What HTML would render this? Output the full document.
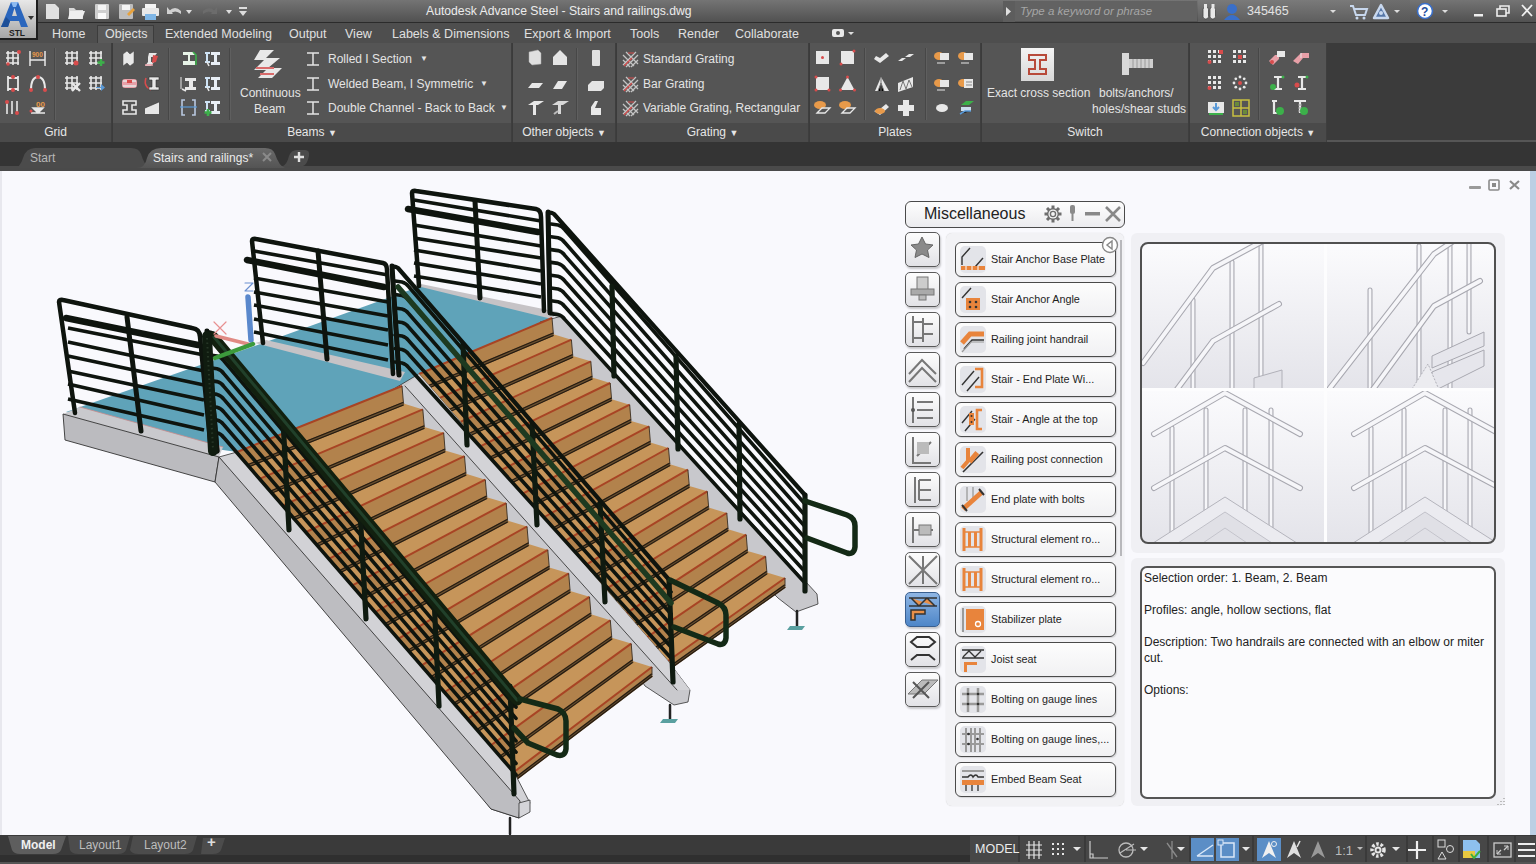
<!DOCTYPE html>
<html><head><meta charset="utf-8">
<style>
*{margin:0;padding:0;box-sizing:border-box}
html,body{width:1536px;height:864px;overflow:hidden;background:#f9f9fc;font-family:"Liberation Sans",sans-serif}
.a{position:absolute}
.t{position:absolute;white-space:nowrap;color:#e4e4e4;font-size:12px;line-height:14px}
.pn{position:absolute;top:43px;height:99px;background:#555555}
.pt{position:absolute;left:0;top:80px;width:100%;height:19px;background:#4a4a4a;color:#e6e6e6;font-size:12px;text-align:center;line-height:19px;white-space:nowrap}
.sep{position:absolute;top:5px;width:2px;height:72px;border-left:1px solid #474747;border-right:1px solid #5f5f5f}
svg{position:absolute;overflow:visible}
.btn{position:absolute;left:955px;width:161px;height:35px;border:1.5px solid #4a4a4a;border-radius:6px;background:linear-gradient(#fdfdfd,#f1f1f3);box-shadow:1px 1px 1px rgba(0,0,0,.12)}
.btn span{position:absolute;left:35px;top:10px;font-size:10.8px;color:#1e1e1e;white-space:nowrap}
.ib{position:absolute;left:905px;width:35px;height:35px;border:1.5px solid #5a5a5a;border-radius:5px;background:linear-gradient(#fdfdfd,#e2e2e6);box-shadow:1px 2px 2px rgba(0,0,0,.2)}
</style></head><body>

<div class="a" style="left:0;top:0;width:1536px;height:23px;background:linear-gradient(#747474,#515151);border-bottom:1px solid #2b2b2b"></div>
<div class="a" style="left:1198px;top:0;width:172px;height:22px;background:linear-gradient(#7a7a7a,#5e5e5e)"></div>
<div class="a" style="left:1370px;top:0;width:40px;height:22px;background:linear-gradient(#6e6e6e,#585858)"></div>
<div class="a" style="left:0;top:0;width:38px;height:40px;background:linear-gradient(#e8e8e8,#a6a6a6);border-right:2px solid #1e1e1e;border-bottom:2px solid #1e1e1e"></div>
<svg style="left:0;top:0" width="40" height="40">
 <path d="M1 27 L11 2 L18 2 L28 27 L21 27 L19 21 L10 21 L8 27 Z M12 16 L17 16 L14.5 8Z" fill="#2a66bd" fill-rule="evenodd"/>
 <path d="M11 2 L18 2 L16 7 L13 7Z" fill="#8dbaf0"/><path d="M1 27 L8 27 L10 21 L6 17Z" fill="#1d4f98"/>
 <path d="M28 16 L34 16 L31 20Z" fill="#333"/>
 <text x="9" y="36" font-size="8.5" font-weight="bold" fill="#1e1e1e" font-family="Liberation Sans">STL</text>
</svg>
<svg style="left:44px;top:2px" width="210" height="20">
 <path d="M2 2h9l4 4v11H2z" fill="#e0e0e0"/>
 <path d="M25 6h5l2 2h7v9H25z" fill="#d8d8d8"/><path d="M26 9h15l-3 8H24z" fill="#eee"/>
 <rect x="51" y="2" width="14" height="15" rx="1" fill="#cfcfcf"/><rect x="54" y="3" width="8" height="5" fill="#f4f4f4"/><rect x="54" y="11" width="8" height="6" fill="#fafafa"/>
 <rect x="75" y="2" width="14" height="15" rx="1" fill="#bdbdbd"/><rect x="78" y="3" width="8" height="5" fill="#f4f4f4"/><path d="M83 12l6-6 2 2-6 6z" fill="#e8a23c"/>
 <rect x="98" y="6" width="17" height="8" rx="1" fill="#e8e8e8"/><rect x="101" y="2" width="11" height="4" fill="#f4f4f4"/><rect x="101" y="12" width="11" height="6" fill="#7fb6e6"/>
 <path d="M125 9 q6 -6 12 0 v3 q-6 -5 -11 0z" fill="#d0d0d0"/><path d="M123 5 l0 7 l6 0z" fill="#d0d0d0"/>
 <path d="M142 8l3 4 3-4z" fill="#ddd"/>
 <path d="M171 9 q-6 -6 -12 0 v3 q6 -5 11 0z" fill="#6c6c6c"/><path d="M173 5 l0 7 l-6 0z" fill="#6c6c6c"/>
 <path d="M182 8l3 4 3-4z" fill="#ddd"/>
 <rect x="195" y="5" width="8" height="2" fill="#ddd"/><path d="M195 9l4 5 4-5z" fill="#ddd"/>
</svg>
<div class="t" style="left:426px;top:4px;font-size:12.2px;color:#ececec">Autodesk Advance Steel - Stairs and railings.dwg</div>
<div class="a" style="left:1003px;top:1px;width:12px;height:21px;background:#5d5d5d"></div>
<svg style="left:1006px;top:7px" width="6" height="9"><path d="M0 0L5 4.5L0 9Z" fill="#e0e0e0"/></svg>
<div class="a" style="left:1015px;top:1px;width:182px;height:20px;background:#626262"></div>
<div class="t" style="left:1020px;top:4px;font-size:11.5px;font-style:italic;color:#a6a6a6">Type a keyword or phrase</div>
<div class="t" style="left:1247px;top:4px;font-size:12.5px;color:#e2e2e2">345465</div>
<svg style="left:1200px;top:2px" width="336" height="20">
 <rect x="3" y="5" width="5.5" height="12" rx="2.5" fill="#e8e8e8" stroke="#444" stroke-width=".8"/><rect x="10" y="5" width="5.5" height="12" rx="2.5" fill="#e8e8e8" stroke="#444" stroke-width=".8"/><rect x="4" y="2" width="3" height="4" fill="#e8e8e8"/><rect x="11.5" y="2" width="3" height="4" fill="#e8e8e8"/>
 <circle cx="32" cy="7" r="5" fill="#3a6fc9"/><path d="M24 18 q8 -10 16 0z" fill="#3a6fc9"/>
 <path d="M130 8l3 3 3-3z" fill="#ddd"/>
 <path d="M150 4h3l3 9h9l2-6h-13" stroke="#c8d8ee" stroke-width="2" fill="none"/><circle cx="157" cy="16" r="1.5" fill="#c8d8ee"/><circle cx="164" cy="16" r="1.5" fill="#c8d8ee"/>
 <path d="M174 16 L181 3 L188 16Z" stroke="#c8d8ee" stroke-width="2.5" fill="#5677a8" stroke-linejoin="round"/><circle cx="181" cy="11" r="2" fill="#c8d8ee"/>
 <path d="M194 8l3 3 3-3z" fill="#ddd"/>
 <circle cx="225" cy="9" r="7.5" fill="#fff" stroke="#3a6fc9" stroke-width="1.6"/><text x="221" y="14" font-size="12" font-weight="bold" fill="#1f4fa0" font-family="Liberation Sans">?</text>
 <path d="M242 8l3 3 3-3z" fill="#ddd"/>
 <rect x="274" y="12" width="9" height="2.5" fill="#eee"/>
 <rect x="297" y="7" width="9" height="7" fill="none" stroke="#eee" stroke-width="1.6"/><path d="M300 7v-3h9v7h-3" fill="none" stroke="#eee" stroke-width="1.6"/>
 <path d="M322 3l10 11M332 3l-10 11" stroke="#f0f0f0" stroke-width="1.8"/>
</svg>
<div class="a" style="left:38px;top:23px;width:1498px;height:20px;background:#4e4e4e"></div>
<div class="a" style="left:0;top:40px;width:38px;height:3px;background:#4e4e4e"></div>
<div class="a" style="left:97px;top:25px;width:57px;height:18px;background:#5a5a5a;border:1px solid #3c3c3c;border-bottom:none"></div>
<div class="t" style="left:52px;top:27px;font-size:12.5px;color:#e0e0e0">Home</div>
<div class="t" style="left:105px;top:27px;font-size:12.5px;color:#e0e0e0">Objects</div>
<div class="t" style="left:165px;top:27px;font-size:12.5px;color:#e0e0e0">Extended Modeling</div>
<div class="t" style="left:289px;top:27px;font-size:12.5px;color:#e0e0e0">Output</div>
<div class="t" style="left:345px;top:27px;font-size:12.5px;color:#e0e0e0">View</div>
<div class="t" style="left:392px;top:27px;font-size:12.5px;color:#e0e0e0">Labels &amp; Dimensions</div>
<div class="t" style="left:524px;top:27px;font-size:12.5px;color:#e0e0e0">Export &amp; Import</div>
<div class="t" style="left:630px;top:27px;font-size:12.5px;color:#e0e0e0">Tools</div>
<div class="t" style="left:678px;top:27px;font-size:12.5px;color:#e0e0e0">Render</div>
<div class="t" style="left:735px;top:27px;font-size:12.5px;color:#e0e0e0">Collaborate</div>
<svg style="left:832px;top:28px" width="30" height="12"><rect x="0" y="1" width="12" height="8" rx="2" fill="#e8e8e8"/><circle cx="6" cy="5" r="2" fill="#555"/><path d="M16 4l3 3 3-3z" fill="#ddd"/></svg>
<div class="a" style="left:0;top:43px;width:1536px;height:99px;background:#3b3b3b"></div>
<div class="pn" style="left:0px;width:112px;border-right:1px solid #3e3e3e"><div class="pt">Grid</div></div>
<div class="pn" style="left:113px;width:399px;border-right:1px solid #3e3e3e"><div class="pt">Beams <span style="font-size:9px">&#9660;</span></div></div>
<div class="pn" style="left:513px;width:103px;border-right:1px solid #3e3e3e"><div class="pt">Other objects <span style="font-size:9px">&#9660;</span></div></div>
<div class="pn" style="left:617px;width:192px;border-right:1px solid #3e3e3e"><div class="pt">Grating <span style="font-size:9px">&#9660;</span></div></div>
<div class="pn" style="left:810px;width:171px;border-right:1px solid #3e3e3e"><div class="pt">Plates</div></div>
<div class="pn" style="left:982px;width:207px;border-right:1px solid #3e3e3e"><div class="pt">Switch</div></div>
<div class="pn" style="left:1190px;width:137px;border-right:1px solid #3e3e3e"><div class="pt">Connection objects <span style="font-size:9px">&#9660;</span></div></div>
<div class="sep" style="left:54px;top:48px;position:absolute"></div>
<div class="sep" style="left:168px;top:48px;position:absolute"></div>
<div class="sep" style="left:229px;top:48px;position:absolute"></div>
<div class="sep" style="left:576px;top:48px;position:absolute"></div>
<div class="sep" style="left:864px;top:48px;position:absolute"></div>
<div class="sep" style="left:925px;top:48px;position:absolute"></div>
<div class="sep" style="left:1258px;top:48px;position:absolute"></div>
<svg style="left:5px;top:50px" width="18" height="18"><path d="M1 3h13M1 8h13M1 13h13M3 1v14M8 1v14M13 1v14" stroke="#e8e8e8" stroke-width="1.6"/><circle cx="14" cy="2" r="2" fill="#d84c4c"/><circle cx="3" cy="14" r="1.8" fill="#d84c4c"/></svg>
<svg style="left:29px;top:50px" width="18" height="18"><path d="M1 1v15M16 1v15M1 10h15" stroke="#e8e8e8" stroke-width="1.5"/><text x="3" y="7" font-size="6.5" font-weight="bold" fill="#e89a4a" font-family="Liberation Sans">900</text></svg>
<svg style="left:5px;top:75px" width="18" height="18"><path d="M3 1v15M13 1v15M3 3h10M3 14h10" stroke="#e8e8e8" stroke-width="1.8"/><circle cx="8" cy="2" r="2" fill="#d84c4c"/><circle cx="8" cy="15" r="2" fill="#d84c4c"/></svg>
<svg style="left:29px;top:75px" width="18" height="18"><path d="M2 15 Q2 2 9 2 Q16 2 16 15" stroke="#e8e8e8" stroke-width="2" fill="none"/><circle cx="9" cy="2" r="2" fill="#d84c4c"/><circle cx="2" cy="15" r="2" fill="#d84c4c"/><circle cx="16" cy="15" r="2" fill="#d84c4c"/></svg>
<svg style="left:5px;top:99px" width="18" height="18"><path d="M2 2v13M7 2v13M12 2v13" stroke="#e8e8e8" stroke-width="1.6"/><circle cx="2" cy="3" r="2" fill="#d84c4c"/><circle cx="12" cy="14" r="2" fill="#d84c4c"/></svg>
<svg style="left:29px;top:99px" width="18" height="18"><text x="7" y="8" font-size="8" font-weight="bold" fill="#e89a4a" font-family="Liberation Sans">00</text><path d="M2 14h14M4 9h10l-5 5z" stroke="#e8e8e8" stroke-width="1.5" fill="#e8e8e8"/><circle cx="2" cy="12" r="1.5" fill="#d84c4c"/></svg>
<svg style="left:64px;top:50px" width="18" height="18"><path d="M1 3h13M1 8h13M1 13h13M3 1v14M8 1v14M13 1v14" stroke="#e8e8e8" stroke-width="1.6"/><circle cx="12" cy="13" r="2.5" fill="#d84c4c"/></svg>
<svg style="left:88px;top:50px" width="18" height="18"><path d="M1 3h13M1 8h13M1 13h13M3 1v14M8 1v14M13 1v14" stroke="#e8e8e8" stroke-width="1.6"/><path d="M13 9v7M9.5 12.5h7" stroke="#3cb04a" stroke-width="2.4"/></svg>
<svg style="left:64px;top:75px" width="18" height="18"><path d="M1 3h13M1 8h13M1 13h13M3 1v14M8 1v14M13 1v14" stroke="#e8e8e8" stroke-width="1.6"/><path d="M8 8l8 8M16 8l-8 8" stroke="#e8e8e8" stroke-width="2.4"/></svg>
<svg style="left:88px;top:75px" width="18" height="18"><path d="M1 3h13M1 8h13M1 13h13M3 1v14M8 1v14M13 1v14" stroke="#e8e8e8" stroke-width="1.6"/><path d="M8 12h5v-3l4 3.5-4 3.5v-3H8z" fill="#5a9ad8"/></svg>
<svg style="left:121px;top:50px" width="18" height="18"><path d="M2 4l4-3 3 3 4-3v12l-4 3-3-3-4 3z" fill="#e8e8e8" stroke="#444" stroke-width=".5"/></svg>
<svg style="left:143px;top:50px" width="18" height="18"><path d="M6 3h8l-3 4H8v5h3l-3 4H2l3-4V7z" fill="#e8e8e8"/><path d="M10 5l5 1-2 6-4 1z" fill="#d84c4c"/><path d="M2 15h8" stroke="#e8a0a8" stroke-width="1.5"/></svg>
<svg style="left:121px;top:75px" width="18" height="18"><rect x="1" y="4" width="15" height="9" rx="3" fill="#e8a0a8"/><path d="M2 6h13M2 11h13" stroke="#e8e8e8" stroke-width="1.4"/><rect x="6" y="5" width="5" height="3" fill="#d84c4c"/></svg>
<svg style="left:143px;top:75px" width="18" height="18"><path d="M3 3 Q1 8 4 12 L8 15" stroke="#d84c4c" stroke-width="1.6" fill="none"/><path d="M6 2h10v3h-3v7h3v3H6v-3h3V5H6z" fill="#e8e8e8" stroke="#333" stroke-width=".6"/></svg>
<svg style="left:121px;top:99px" width="18" height="18"><path d="M2 2h13v4h-4v5h4v4H2v-4h4V6H2z" fill="none" stroke="#e8e8e8" stroke-width="1.6"/></svg>
<svg style="left:143px;top:99px" width="18" height="18"><path d="M2 9l14-6v12H2z" fill="#e8e8e8"/><path d="M2 9l14-6" stroke="#333" stroke-width=".6"/></svg>
<svg style="left:180px;top:50px" width="18" height="18"><path d="M3 2h10l2 3h-5v6h5v4H3v-4h5V5H3z" fill="#e8f4e8"/><path d="M13 2l3 3v10" stroke="#3cb04a" stroke-width="1.6" fill="none"/></svg>
<svg style="left:203px;top:50px" width="18" height="18"><path d="M2 3h5M4 3v9M2 12h5" stroke="#cfe3f5" stroke-width="2"/><path d="M8 2h9v3h-3v7h3v3H8v-3h3V5H8z" fill="#e8eef5"/><path d="M4 12l2 4" stroke="#e8e8e8" stroke-width="1.5"/></svg>
<svg style="left:180px;top:75px" width="18" height="18"><path d="M1 2v12" stroke="#e8e8e8" stroke-width="1"/><path d="M5 3h11v3h-3v6h3v3H5v-3h4V6H5z" fill="#e8e8e8"/><path d="M2 14l4 2" stroke="#e8e8e8" stroke-width="1.6"/></svg>
<svg style="left:203px;top:75px" width="18" height="18"><path d="M2 3h5M4 3v9M2 12h5" stroke="#cfe3f5" stroke-width="2"/><path d="M8 2h9v3h-3v7h3v3H8v-3h3V5H8z" fill="#e8eef5"/><path d="M4 12l2 4" stroke="#e8e8e8" stroke-width="1.5"/></svg>
<svg style="left:180px;top:99px" width="18" height="18"><path d="M5 1H2v15h3M12 1h3v15h-3" stroke="#b8c8e0" stroke-width="1.6" fill="none"/><path d="M0 8h17" stroke="#5a9ad8" stroke-width="1.2"/></svg>
<svg style="left:203px;top:99px" width="18" height="18"><path d="M2 3h5M4 3v9M2 12h5" stroke="#cfe3f5" stroke-width="2"/><path d="M8 2h9v3h-3v7h3v3H8v-3h3V5H8z" fill="#e8eef5"/><path d="M5 10v7M1.5 13.5h7" stroke="#3cb04a" stroke-width="2.6"/></svg>
<svg style="left:527px;top:49px" width="18" height="18"><path d="M2 3l9-2 3 3v11l-9 1-3-3z" fill="#e0e0e0" stroke="#aaa" stroke-width=".5"/></svg>
<svg style="left:551px;top:49px" width="18" height="18"><path d="M2 8l7-7 7 7v8H2z" fill="#e4e4e4"/></svg>
<svg style="left:587px;top:49px" width="18" height="18"><rect x="5" y="1" width="8" height="16" rx="1" fill="#e0e0e0"/></svg>
<svg style="left:527px;top:75px" width="18" height="18"><path d="M1 13l4-5h11l-4 5z" fill="#e8e8e8"/></svg>
<svg style="left:551px;top:75px" width="18" height="18"><path d="M2 14l5-8h9l-5 8z" fill="#e8e8e8"/></svg>
<svg style="left:587px;top:75px" width="18" height="18"><path d="M1 10l4-4h12v7l-3 3H1z" fill="#e4e4e4"/></svg>
<svg style="left:527px;top:99px" width="18" height="18"><path d="M1 6l6-4h10l-6 4h-2v10H6V6z" fill="#e8e8e8"/></svg>
<svg style="left:551px;top:99px" width="18" height="18"><path d="M1 6l6-4h11l-6 4h-2v9h-3V6z" fill="#d8d8d8"/><path d="M3 15l4 -3" stroke="#bbb" stroke-width="2"/></svg>
<svg style="left:587px;top:99px" width="18" height="18"><path d="M4 16V8l4-6h3l-3 7h6v7z" fill="#e8e8e8"/></svg>
<svg style="left:814px;top:49px" width="18" height="18"><rect x="2" y="2" width="13" height="13" fill="#e8e8e8"/><circle cx="8.5" cy="8.5" r="1.5" fill="#d84c4c"/></svg>
<svg style="left:839px;top:49px" width="18" height="18"><rect x="2" y="2" width="13" height="13" fill="#e8e8e8"/><circle cx="15" cy="2" r="1.5" fill="#d84c4c"/><circle cx="2" cy="15" r="1.5" fill="#d84c4c"/></svg>
<svg style="left:814px;top:75px" width="18" height="18"><rect x="2" y="2" width="13" height="13" fill="#e8e8e8"/><circle cx="2" cy="2" r="1.5" fill="#d84c4c"/><circle cx="15" cy="15" r="1.5" fill="#d84c4c"/><circle cx="2" cy="15" r="1.5" fill="#d84c4c"/></svg>
<svg style="left:839px;top:75px" width="18" height="18"><path d="M8.5 2l7 13h-14z" fill="#e8e8e8"/><circle cx="8.5" cy="2" r="1.5" fill="#d84c4c"/><circle cx="15.5" cy="15" r="1.5" fill="#d84c4c"/><circle cx="1.5" cy="15" r="1.5" fill="#d84c4c"/></svg>
<svg style="left:813px;top:99px" width="18" height="18"><ellipse cx="7" cy="6" rx="6" ry="4" fill="#e89a4a"/><path d="M4 14l5-5h8l-5 5z" fill="none" stroke="#e8e8e8" stroke-width="1.3"/></svg>
<svg style="left:838px;top:99px" width="18" height="18"><ellipse cx="7" cy="6" rx="6" ry="4" fill="#e89a4a"/><path d="M4 14l5-5h8l-5 5z" fill="none" stroke="#e8e8e8" stroke-width="1.3"/></svg>
<svg style="left:873px;top:49px" width="18" height="18"><path d="M1 10l6 4 9-7-3-3-6 5-4-2z" fill="#e8e8e8"/></svg>
<svg style="left:897px;top:49px" width="18" height="18"><path d="M1 12l4-3h4l-4 3zM8 8l4-3h5l-4 3z" fill="#e8e8e8"/></svg>
<svg style="left:873px;top:75px" width="18" height="18"><path d="M2 16l6-14 8 14z" fill="#e8e8e8"/><path d="M8 2v14M5 16l3-8 3 8" stroke="#777" stroke-width="1"/></svg>
<svg style="left:897px;top:75px" width="18" height="18"><path d="M1 8l15-6v10L1 17z" fill="#e8e8e8"/><path d="M3 15l3-9 3 8 3-9 3 7" stroke="#777" stroke-width="1" fill="none"/></svg>
<svg style="left:873px;top:99px" width="18" height="18"><path d="M1 12l6 4 9-8-3-3-6 5z" fill="#e8e8e8"/><ellipse cx="7" cy="12" rx="5" ry="3" fill="#e89a4a"/></svg>
<svg style="left:897px;top:99px" width="18" height="18"><path d="M6 1h6v5h5v6h-5v5H6v-5H1V6h5z" fill="#e8e8e8"/></svg>
<svg style="left:933px;top:49px" width="18" height="18"><ellipse cx="6" cy="7" rx="5" ry="4" fill="#e89a4a"/><rect x="7" y="4" width="9" height="7" fill="#e8e8e8"/><path d="M4 14h8" stroke="#e8e8e8"/></svg>
<svg style="left:957px;top:49px" width="18" height="18"><ellipse cx="6" cy="7" rx="5" ry="4" fill="#e89a4a"/><rect x="7" y="4" width="9" height="7" fill="#e8e8e8"/><path d="M4 14h8" stroke="#e8e8e8"/></svg>
<svg style="left:933px;top:75px" width="18" height="18"><ellipse cx="6" cy="8" rx="5" ry="4" fill="#e89a4a"/><rect x="7" y="5" width="9" height="7" fill="#e8e8e8"/><path d="M4 15h8" stroke="#e8e8e8"/></svg>
<svg style="left:957px;top:75px" width="18" height="18"><ellipse cx="6" cy="8" rx="5" ry="4" fill="#e89a4a"/><rect x="7" y="4" width="9" height="9" fill="#e8e8e8"/><path d="M9 7h6M9 10h6" stroke="#888"/></svg>
<svg style="left:933px;top:99px" width="18" height="18"><ellipse cx="9" cy="9" rx="6" ry="4" fill="#e8e8e8"/></svg>
<svg style="left:957px;top:99px" width="18" height="18"><path d="M4 6l5-4h8l-5 4z" fill="#3cb04a"/><path d="M4 8h10v4H4z" fill="#cde"/><path d="M3 15l5-3h6" stroke="#5a9ad8" stroke-width="1.5"/></svg>
<svg style="left:1207px;top:49px" width="18" height="18"><rect x="1" y="1" width="3" height="3" fill="#e8e8e8"/><rect x="1" y="6" width="3" height="3" fill="#e8e8e8"/><rect x="1" y="11" width="3" height="3" fill="#e8e8e8"/><rect x="6" y="1" width="3" height="3" fill="#e8e8e8"/><rect x="6" y="6" width="3" height="3" fill="#e8e8e8"/><rect x="6" y="11" width="3" height="3" fill="#e8e8e8"/><rect x="11" y="1" width="3" height="3" fill="#e8e8e8"/><rect x="11" y="6" width="3" height="3" fill="#e8e8e8"/><rect x="11" y="11" width="3" height="3" fill="#e8e8e8"/><rect x="12" y="1" width="4" height="4" fill="#d84c4c"/><circle cx="2.5" cy="13" r="2" fill="#d84c4c"/></svg>
<svg style="left:1232px;top:49px" width="18" height="18"><rect x="1" y="1" width="3" height="3" fill="#e8e8e8"/><rect x="1" y="6" width="3" height="3" fill="#e8e8e8"/><rect x="1" y="11" width="3" height="3" fill="#e8e8e8"/><rect x="6" y="1" width="3" height="3" fill="#e8e8e8"/><rect x="6" y="6" width="3" height="3" fill="#e8e8e8"/><rect x="6" y="11" width="3" height="3" fill="#e8e8e8"/><rect x="11" y="1" width="3" height="3" fill="#e8e8e8"/><rect x="11" y="6" width="3" height="3" fill="#e8e8e8"/><rect x="11" y="11" width="3" height="3" fill="#e8e8e8"/><rect x="6" y="6" width="4" height="4" fill="#d84c4c"/></svg>
<svg style="left:1207px;top:75px" width="18" height="18"><rect x="1" y="1" width="3" height="3" fill="#e8e8e8"/><rect x="1" y="6" width="3" height="3" fill="#e8e8e8"/><rect x="1" y="11" width="3" height="3" fill="#e8e8e8"/><rect x="6" y="1" width="3" height="3" fill="#e8e8e8"/><rect x="6" y="6" width="3" height="3" fill="#e8e8e8"/><rect x="6" y="11" width="3" height="3" fill="#e8e8e8"/><rect x="11" y="1" width="3" height="3" fill="#e8e8e8"/><rect x="11" y="6" width="3" height="3" fill="#e8e8e8"/><rect x="11" y="11" width="3" height="3" fill="#e8e8e8"/><circle cx="2.5" cy="13" r="2" fill="#d84c4c"/></svg>
<svg style="left:1232px;top:75px" width="18" height="18"><circle cx="14.0" cy="8.0" r="1.4" fill="#e8e8e8"/><circle cx="12.2" cy="12.2" r="1.4" fill="#e8e8e8"/><circle cx="8.0" cy="14.0" r="1.4" fill="#e8e8e8"/><circle cx="3.8" cy="12.2" r="1.4" fill="#e8e8e8"/><circle cx="2.0" cy="8.0" r="1.4" fill="#e8e8e8"/><circle cx="3.8" cy="3.8" r="1.4" fill="#e8e8e8"/><circle cx="8.0" cy="2.0" r="1.4" fill="#e8e8e8"/><circle cx="12.2" cy="3.8" r="1.4" fill="#e8e8e8"/><circle cx="8" cy="8" r="2" fill="#d84c4c"/></svg>
<svg style="left:1207px;top:99px" width="18" height="18"><rect x="1" y="3" width="16" height="11" fill="#e8e8e8"/><path d="M9 4v6M6 8l3 3 3-3" stroke="#5a9ad8" stroke-width="2" fill="none"/><path d="M2 15h14" stroke="#3cb04a" stroke-width="2"/></svg>
<svg style="left:1232px;top:99px" width="18" height="18"><rect x="1" y="1" width="16" height="16" fill="none" stroke="#c8c040" stroke-width="1.5"/><path d="M9 1v16M1 9h16" stroke="#c8c040" stroke-width="1.5"/><rect x="3" y="3" width="4" height="4" fill="#6a8a3a"/><rect x="11" y="11" width="4" height="4" fill="#6a8a3a"/></svg>
<svg style="left:1268px;top:49px" width="18" height="18"><path d="M1 12l6-6h4v4l-6 6z" fill="#e8a0a8"/><rect x="9" y="2" width="8" height="6" fill="#e8e8e8"/><circle cx="4" cy="13" r="2" fill="#d84c4c"/></svg>
<svg style="left:1292px;top:49px" width="18" height="18"><path d="M1 12l8-8h8v5h-6l-5 6z" fill="#e8a0a8"/><path d="M9 4v5" stroke="#e8e8e8"/></svg>
<svg style="left:1268px;top:75px" width="18" height="18"><path d="M6 2h8M10 2v12M6 14h8" stroke="#e8e8e8" stroke-width="2.2"/><circle cx="5" cy="12" r="3" fill="#3cb04a"/><circle cx="15" cy="2" r="1.5" fill="#3cb04a"/></svg>
<svg style="left:1292px;top:75px" width="18" height="18"><path d="M6 2h8M10 2v12M6 14h8" stroke="#e8e8e8" stroke-width="2.2"/><circle cx="5" cy="10" r="2.5" fill="#d84c4c"/><circle cx="15" cy="2" r="1.5" fill="#3cb04a"/></svg>
<svg style="left:1268px;top:99px" width="18" height="18"><path d="M4 2h5M6 2v12h5" stroke="#e8e8e8" stroke-width="2.2" fill="none"/><circle cx="12" cy="12" r="4" fill="#3cb04a"/></svg>
<svg style="left:1292px;top:99px" width="18" height="18"><path d="M2 2h12M8 2v12" stroke="#e8e8e8" stroke-width="2.2"/><path d="M6 6h4M6 9h4M6 12h4" stroke="#999"/><circle cx="12" cy="12" r="4" fill="#3cb04a"/></svg>
<svg style="left:250px;top:48px" width="36" height="34"><path d="M10 2l14 0l-8 8h14l-12 10h14l-10 10H8l8-8H4l10-10H4z" fill="#e8e8e8"/><path d="M6 20h18M10 26h14" stroke="#d86a6a" stroke-width="2"/></svg>
<div class="t" style="left:240px;top:86px">Continuous</div><div class="t" style="left:254px;top:102px">Beam</div>
<svg style="left:305px;top:51px" width="16" height="16"><path d="M2 2h12M2 14h12M8 2v12" stroke="#e4e4e4" stroke-width="1.5"/></svg>
<div class="t" style="left:328px;top:52px">Rolled I Section</div>
<div class="t" style="left:420px;top:52px;font-size:8px">&#9660;</div>
<svg style="left:305px;top:76px" width="16" height="16"><path d="M2 2h12M2 14h12M8 2v12" stroke="#e4e4e4" stroke-width="1.5"/></svg>
<div class="t" style="left:328px;top:77px">Welded Beam, I Symmetric</div>
<div class="t" style="left:480px;top:77px;font-size:8px">&#9660;</div>
<svg style="left:305px;top:100px" width="16" height="16"><path d="M2 2h12M2 14h12M8 2v12" stroke="#e4e4e4" stroke-width="1.5"/></svg>
<div class="t" style="left:328px;top:101px">Double Channel - Back to Back</div>
<div class="t" style="left:500px;top:101px;font-size:8px">&#9660;</div>
<svg style="left:622px;top:51px" width="18" height="18"><path d="M1 4l11 11M4 1l12 12M1 9l7 7M1 14l13-13M4 16l12-12M9 16l7-7" stroke="#c4c4c4" stroke-width="1.3"/><path d="M2 15l8-8M6 2l6 0" stroke="#d84c4c" stroke-width="1.2"/></svg>
<div class="t" style="left:643px;top:52px">Standard Grating</div>
<svg style="left:622px;top:76px" width="18" height="18"><path d="M1 4l11 11M4 1l12 12M1 9l7 7M1 14l13-13M4 16l12-12M9 16l7-7" stroke="#c4c4c4" stroke-width="1.3"/><path d="M2 15l8-8M6 2l6 0" stroke="#d84c4c" stroke-width="1.2"/></svg>
<div class="t" style="left:643px;top:77px">Bar Grating</div>
<svg style="left:622px;top:100px" width="18" height="18"><path d="M1 4l11 11M4 1l12 12M1 9l7 7M1 14l13-13M4 16l12-12M9 16l7-7" stroke="#c4c4c4" stroke-width="1.3"/><path d="M2 15l8-8M6 2l6 0" stroke="#d84c4c" stroke-width="1.2"/></svg>
<div class="t" style="left:643px;top:101px">Variable Grating, Rectangular</div>
<div class="a" style="left:1021px;top:48px;width:33px;height:33px;background:linear-gradient(#f4f4f4,#d8d8d8)"></div>
<svg style="left:1021px;top:48px" width="33" height="33"><path d="M8 7h17v5h-6v9h6v5H8v-5h6v-9H8z" fill="none" stroke="#b84a3a" stroke-width="2"/></svg>
<svg style="left:1120px;top:52px" width="36" height="24"><rect x="2" y="1" width="7" height="22" fill="#d8d8d8"/><rect x="9" y="7" width="24" height="9" fill="#cfcfcf"/><path d="M13 7v9M17 7v9M21 7v9M25 7v9M29 7v9" stroke="#9a9a9a"/></svg>
<div class="t" style="left:987px;top:86px">Exact cross section</div>
<div class="t" style="left:1099px;top:86px">bolts/anchors/</div><div class="t" style="left:1092px;top:102px">holes/shear studs</div>
<div class="a" style="left:0;top:142px;width:1536px;height:29px;background:#343434"></div>
<div class="a" style="left:1327px;top:140px;width:209px;height:2px;background:#565656"></div>
<div class="a" style="left:0;top:166px;width:1536px;height:5px;background:#4a4a4a"></div>
<svg style="left:0;top:143px" width="320" height="28"><defs><linearGradient id="tg" x1="0" y1="0" x2="0" y2="1"><stop offset="0" stop-color="#6a6a6a"/><stop offset="1" stop-color="#545454"/></linearGradient></defs><path d="M14 25 q6 0 9 -10 q3 -10 12 -10 h96 q8 0 10 6 q3 10 8 14z" fill="#4b4b4b"/><path d="M137 25 q8 0 10 -10 q3 -10 14 -10 h104 q8 0 10 6 q4 12 10 14z" fill="url(#tg)"/><path d="M283 23 q4 -2 6 -10 q2 -6 8 -6 h8 q5 0 4 6 q-2 9 -6 10z" fill="#4b4b4b"/></svg>
<div class="t" style="left:30px;top:151px;color:#b8b8b8">Start</div>
<div class="t" style="left:153px;top:151px;color:#ececec">Stairs and railings*</div>
<svg style="left:262px;top:152px" width="10" height="10"><path d="M1 1l8 8M9 1l-8 8" stroke="#8a8a8a" stroke-width="2"/></svg>
<svg style="left:292px;top:150px" width="14" height="14"><path d="M7 2v10M2 7h10" stroke="#e0e0e0" stroke-width="2.4"/></svg>
<div class="a" style="left:0;top:171px;width:1530px;height:664px;background:#f9f9fd;border-left:2px solid #e8e8ee"></div>
<div class="a" style="left:1530px;top:171px;width:6px;height:664px;background:#bccfe4"></div>
<svg style="left:1466px;top:178px" width="60" height="14">
 <rect x="3" y="8" width="12" height="3" rx="1" fill="#9a9a9a"/>
 <rect x="23" y="2" width="10" height="10" rx="1" fill="none" stroke="#8a8a8a" stroke-width="1.6"/><rect x="26" y="5" width="4" height="4" fill="#8a8a8a"/>
 <path d="M44 3l9 8M53 3l-9 8" stroke="#8a8a8a" stroke-width="2.2"/>
</svg>
<svg style="left:0;top:0" width="1536" height="864">
<polygon points="66.0,412.0 223.0,450.0 237.0,452.0 402.0,386.0 419.0,374.0 552.0,318.0 421.0,286.0 266.0,342.0" fill="#5fa3b9" stroke="none" stroke-width="1" stroke-linejoin="round" />
<polygon points="63.0,414.0 80.0,407.0 223.0,447.0 219.0,457.0" fill="#c9c9cd" stroke="none" stroke-width="1" stroke-linejoin="round" />
<polygon points="255.0,343.0 266.0,340.0 405.0,372.0 400.0,381.0" fill="#c6c3c6" stroke="none" stroke-width="1" stroke-linejoin="round" />
<polygon points="413.0,285.0 421.0,284.0 558.0,312.0 552.0,319.0" fill="#c6c3c6" stroke="none" stroke-width="1" stroke-linejoin="round" />
<line x1="80.0" y1="407.0" x2="223.0" y2="447.0" stroke="#c98a8a" stroke-width="0.8" stroke-linecap="round"/>
<polygon points="63.0,414.0 219.0,457.0 215.0,482.0 65.0,440.0" fill="#bbbbbf" stroke="#333" stroke-width="0.9" stroke-linejoin="round" />
<polygon points="540.0,322.0 562.0,316.0 817.0,594.0 818.0,604.0 796.0,612.0 778.0,598.0 770.0,590.0" fill="#c8c8cc" stroke="#333" stroke-width="0.8" stroke-linejoin="round" />
<line x1="797.0" y1="611.0" x2="797.0" y2="626.0" stroke="#222" stroke-width="2.5" stroke-linecap="round"/>
<polygon points="790.0,626.0 805.0,626.0 802.0,630.0 787.0,630.0" fill="#5aa0a0" stroke="none" stroke-width="1" stroke-linejoin="round" />
<polygon points="552.0,318.0 553.4,334.2 420.4,390.2 419.0,374.0" fill="#b2824c" stroke="none" stroke-width="1" stroke-linejoin="round" />
<polygon points="553.4,334.2 571.4,339.7 439.8,397.9 420.4,390.2" fill="#c6955a" stroke="none" stroke-width="1" stroke-linejoin="round" />
<polygon points="571.4,339.7 572.8,355.9 441.1,414.2 439.8,397.9" fill="#b2824c" stroke="none" stroke-width="1" stroke-linejoin="round" />
<polygon points="572.8,355.9 590.8,361.3 460.5,421.8 441.1,414.2" fill="#c6955a" stroke="none" stroke-width="1" stroke-linejoin="round" />
<polygon points="590.8,361.3 592.2,377.6 461.9,438.1 460.5,421.8" fill="#b2824c" stroke="none" stroke-width="1" stroke-linejoin="round" />
<polygon points="592.2,377.6 610.2,383.0 481.2,445.8 461.9,438.1" fill="#c6955a" stroke="none" stroke-width="1" stroke-linejoin="round" />
<polygon points="610.2,383.0 611.6,399.2 482.6,462.0 481.2,445.8" fill="#b2824c" stroke="none" stroke-width="1" stroke-linejoin="round" />
<polygon points="611.6,399.2 629.7,404.7 502.0,469.7 482.6,462.0" fill="#c6955a" stroke="none" stroke-width="1" stroke-linejoin="round" />
<polygon points="629.7,404.7 631.0,420.9 503.4,485.9 502.0,469.7" fill="#b2824c" stroke="none" stroke-width="1" stroke-linejoin="round" />
<polygon points="631.0,420.9 649.1,426.3 522.8,493.6 503.4,485.9" fill="#c6955a" stroke="none" stroke-width="1" stroke-linejoin="round" />
<polygon points="649.1,426.3 650.4,442.6 524.1,509.8 522.8,493.6" fill="#b2824c" stroke="none" stroke-width="1" stroke-linejoin="round" />
<polygon points="650.4,442.6 668.5,448.0 543.5,517.5 524.1,509.8" fill="#c6955a" stroke="none" stroke-width="1" stroke-linejoin="round" />
<polygon points="668.5,448.0 669.9,464.2 544.9,533.8 543.5,517.5" fill="#b2824c" stroke="none" stroke-width="1" stroke-linejoin="round" />
<polygon points="669.9,464.2 687.9,469.7 564.2,541.4 544.9,533.8" fill="#c6955a" stroke="none" stroke-width="1" stroke-linejoin="round" />
<polygon points="687.9,469.7 689.3,485.9 565.6,557.7 564.2,541.4" fill="#b2824c" stroke="none" stroke-width="1" stroke-linejoin="round" />
<polygon points="689.3,485.9 707.3,491.3 585.0,565.3 565.6,557.7" fill="#c6955a" stroke="none" stroke-width="1" stroke-linejoin="round" />
<polygon points="707.3,491.3 708.7,507.6 586.4,581.6 585.0,565.3" fill="#b2824c" stroke="none" stroke-width="1" stroke-linejoin="round" />
<polygon points="708.7,507.6 726.8,513.0 605.8,589.2 586.4,581.6" fill="#c6955a" stroke="none" stroke-width="1" stroke-linejoin="round" />
<polygon points="726.8,513.0 728.1,529.2 607.1,605.5 605.8,589.2" fill="#b2824c" stroke="none" stroke-width="1" stroke-linejoin="round" />
<polygon points="728.1,529.2 746.2,534.7 626.5,613.2 607.1,605.5" fill="#c6955a" stroke="none" stroke-width="1" stroke-linejoin="round" />
<polygon points="746.2,534.7 747.5,550.9 627.9,629.4 626.5,613.2" fill="#b2824c" stroke="none" stroke-width="1" stroke-linejoin="round" />
<polygon points="747.5,550.9 765.6,556.3 647.2,637.1 627.9,629.4" fill="#c6955a" stroke="none" stroke-width="1" stroke-linejoin="round" />
<polygon points="765.6,556.3 766.9,572.6 648.6,653.3 647.2,637.1" fill="#b2824c" stroke="none" stroke-width="1" stroke-linejoin="round" />
<polygon points="766.9,572.6 785.0,578.0 668.0,661.0 648.6,653.3" fill="#c6955a" stroke="none" stroke-width="1" stroke-linejoin="round" />
<polygon points="785.0,578.0 785.0,586.0 668.0,669.0 668.0,661.0" fill="#b2824c" stroke="none" stroke-width="1" stroke-linejoin="round" />
<line x1="552.0" y1="318.0" x2="419.0" y2="374.0" stroke="#a84424" stroke-width="2.0" stroke-linecap="butt"/>
<line x1="553.4" y1="334.2" x2="420.4" y2="390.2" stroke="#6a5030" stroke-width="3.6" stroke-linecap="butt"/>
<line x1="553.4" y1="332.9" x2="420.4" y2="388.9" stroke="#241a10" stroke-width="1.1" stroke-linecap="butt"/>
<line x1="553.4" y1="335.6" x2="420.4" y2="391.6" stroke="#241a10" stroke-width="1.1" stroke-linecap="butt"/>
<line x1="552.0" y1="318.0" x2="553.4" y2="334.2" stroke="#3a2e20" stroke-width="0.9" stroke-linecap="butt"/>
<line x1="571.4" y1="339.7" x2="439.8" y2="397.9" stroke="#a84424" stroke-width="2.0" stroke-linecap="butt"/>
<line x1="572.8" y1="355.9" x2="441.1" y2="414.2" stroke="#6a5030" stroke-width="3.6" stroke-linecap="butt"/>
<line x1="572.8" y1="354.6" x2="441.1" y2="412.9" stroke="#241a10" stroke-width="1.1" stroke-linecap="butt"/>
<line x1="572.8" y1="357.2" x2="441.1" y2="415.5" stroke="#241a10" stroke-width="1.1" stroke-linecap="butt"/>
<line x1="571.4" y1="339.7" x2="572.8" y2="355.9" stroke="#3a2e20" stroke-width="0.9" stroke-linecap="butt"/>
<line x1="590.8" y1="361.3" x2="460.5" y2="421.8" stroke="#a84424" stroke-width="2.0" stroke-linecap="butt"/>
<line x1="592.2" y1="377.6" x2="461.9" y2="438.1" stroke="#6a5030" stroke-width="3.6" stroke-linecap="butt"/>
<line x1="592.2" y1="376.3" x2="461.9" y2="436.8" stroke="#241a10" stroke-width="1.1" stroke-linecap="butt"/>
<line x1="592.2" y1="378.9" x2="461.9" y2="439.4" stroke="#241a10" stroke-width="1.1" stroke-linecap="butt"/>
<line x1="590.8" y1="361.3" x2="592.2" y2="377.6" stroke="#3a2e20" stroke-width="0.9" stroke-linecap="butt"/>
<line x1="610.2" y1="383.0" x2="481.2" y2="445.8" stroke="#a84424" stroke-width="2.0" stroke-linecap="butt"/>
<line x1="611.6" y1="399.2" x2="482.6" y2="462.0" stroke="#6a5030" stroke-width="3.6" stroke-linecap="butt"/>
<line x1="611.6" y1="397.9" x2="482.6" y2="460.7" stroke="#241a10" stroke-width="1.1" stroke-linecap="butt"/>
<line x1="611.6" y1="400.6" x2="482.6" y2="463.3" stroke="#241a10" stroke-width="1.1" stroke-linecap="butt"/>
<line x1="610.2" y1="383.0" x2="611.6" y2="399.2" stroke="#3a2e20" stroke-width="0.9" stroke-linecap="butt"/>
<line x1="629.7" y1="404.7" x2="502.0" y2="469.7" stroke="#a84424" stroke-width="2.0" stroke-linecap="butt"/>
<line x1="631.0" y1="420.9" x2="503.4" y2="485.9" stroke="#6a5030" stroke-width="3.6" stroke-linecap="butt"/>
<line x1="631.0" y1="419.6" x2="503.4" y2="484.6" stroke="#241a10" stroke-width="1.1" stroke-linecap="butt"/>
<line x1="631.0" y1="422.2" x2="503.4" y2="487.2" stroke="#241a10" stroke-width="1.1" stroke-linecap="butt"/>
<line x1="629.7" y1="404.7" x2="631.0" y2="420.9" stroke="#3a2e20" stroke-width="0.9" stroke-linecap="butt"/>
<line x1="649.1" y1="426.3" x2="522.8" y2="493.6" stroke="#a84424" stroke-width="2.0" stroke-linecap="butt"/>
<line x1="650.4" y1="442.6" x2="524.1" y2="509.8" stroke="#6a5030" stroke-width="3.6" stroke-linecap="butt"/>
<line x1="650.4" y1="441.3" x2="524.1" y2="508.5" stroke="#241a10" stroke-width="1.1" stroke-linecap="butt"/>
<line x1="650.4" y1="443.9" x2="524.1" y2="511.1" stroke="#241a10" stroke-width="1.1" stroke-linecap="butt"/>
<line x1="649.1" y1="426.3" x2="650.4" y2="442.6" stroke="#3a2e20" stroke-width="0.9" stroke-linecap="butt"/>
<line x1="668.5" y1="448.0" x2="543.5" y2="517.5" stroke="#a84424" stroke-width="2.0" stroke-linecap="butt"/>
<line x1="669.9" y1="464.2" x2="544.9" y2="533.8" stroke="#6a5030" stroke-width="3.6" stroke-linecap="butt"/>
<line x1="669.9" y1="462.9" x2="544.9" y2="532.5" stroke="#241a10" stroke-width="1.1" stroke-linecap="butt"/>
<line x1="669.9" y1="465.6" x2="544.9" y2="535.0" stroke="#241a10" stroke-width="1.1" stroke-linecap="butt"/>
<line x1="668.5" y1="448.0" x2="669.9" y2="464.2" stroke="#3a2e20" stroke-width="0.9" stroke-linecap="butt"/>
<line x1="687.9" y1="469.7" x2="564.2" y2="541.4" stroke="#a84424" stroke-width="2.0" stroke-linecap="butt"/>
<line x1="689.3" y1="485.9" x2="565.6" y2="557.7" stroke="#6a5030" stroke-width="3.6" stroke-linecap="butt"/>
<line x1="689.3" y1="484.6" x2="565.6" y2="556.4" stroke="#241a10" stroke-width="1.1" stroke-linecap="butt"/>
<line x1="689.3" y1="487.2" x2="565.6" y2="559.0" stroke="#241a10" stroke-width="1.1" stroke-linecap="butt"/>
<line x1="687.9" y1="469.7" x2="689.3" y2="485.9" stroke="#3a2e20" stroke-width="0.9" stroke-linecap="butt"/>
<line x1="707.3" y1="491.3" x2="585.0" y2="565.3" stroke="#a84424" stroke-width="2.0" stroke-linecap="butt"/>
<line x1="708.7" y1="507.6" x2="586.4" y2="581.6" stroke="#6a5030" stroke-width="3.6" stroke-linecap="butt"/>
<line x1="708.7" y1="506.3" x2="586.4" y2="580.3" stroke="#241a10" stroke-width="1.1" stroke-linecap="butt"/>
<line x1="708.7" y1="508.9" x2="586.4" y2="582.9" stroke="#241a10" stroke-width="1.1" stroke-linecap="butt"/>
<line x1="707.3" y1="491.3" x2="708.7" y2="507.6" stroke="#3a2e20" stroke-width="0.9" stroke-linecap="butt"/>
<line x1="726.8" y1="513.0" x2="605.8" y2="589.2" stroke="#a84424" stroke-width="2.0" stroke-linecap="butt"/>
<line x1="728.1" y1="529.2" x2="607.1" y2="605.5" stroke="#6a5030" stroke-width="3.6" stroke-linecap="butt"/>
<line x1="728.1" y1="528.0" x2="607.1" y2="604.2" stroke="#241a10" stroke-width="1.1" stroke-linecap="butt"/>
<line x1="728.1" y1="530.5" x2="607.1" y2="606.8" stroke="#241a10" stroke-width="1.1" stroke-linecap="butt"/>
<line x1="726.8" y1="513.0" x2="728.1" y2="529.2" stroke="#3a2e20" stroke-width="0.9" stroke-linecap="butt"/>
<line x1="746.2" y1="534.7" x2="626.5" y2="613.2" stroke="#a84424" stroke-width="2.0" stroke-linecap="butt"/>
<line x1="747.5" y1="550.9" x2="627.9" y2="629.4" stroke="#6a5030" stroke-width="3.6" stroke-linecap="butt"/>
<line x1="747.5" y1="549.6" x2="627.9" y2="628.1" stroke="#241a10" stroke-width="1.1" stroke-linecap="butt"/>
<line x1="747.5" y1="552.2" x2="627.9" y2="630.7" stroke="#241a10" stroke-width="1.1" stroke-linecap="butt"/>
<line x1="746.2" y1="534.7" x2="747.5" y2="550.9" stroke="#3a2e20" stroke-width="0.9" stroke-linecap="butt"/>
<line x1="765.6" y1="556.3" x2="647.2" y2="637.1" stroke="#a84424" stroke-width="2.0" stroke-linecap="butt"/>
<line x1="766.9" y1="572.6" x2="648.6" y2="653.3" stroke="#6a5030" stroke-width="3.6" stroke-linecap="butt"/>
<line x1="766.9" y1="571.3" x2="648.6" y2="652.0" stroke="#241a10" stroke-width="1.1" stroke-linecap="butt"/>
<line x1="766.9" y1="573.9" x2="648.6" y2="654.6" stroke="#241a10" stroke-width="1.1" stroke-linecap="butt"/>
<line x1="765.6" y1="556.3" x2="766.9" y2="572.6" stroke="#3a2e20" stroke-width="0.9" stroke-linecap="butt"/>
<line x1="785.0" y1="578.0" x2="668.0" y2="661.0" stroke="#a84424" stroke-width="2.0" stroke-linecap="butt"/>
<line x1="785.0" y1="586.0" x2="668.0" y2="669.0" stroke="#6a5030" stroke-width="3.6" stroke-linecap="butt"/>
<line x1="785.0" y1="584.7" x2="668.0" y2="667.7" stroke="#241a10" stroke-width="1.1" stroke-linecap="butt"/>
<line x1="785.0" y1="587.3" x2="668.0" y2="670.3" stroke="#241a10" stroke-width="1.1" stroke-linecap="butt"/>
<line x1="785.0" y1="578.0" x2="785.0" y2="586.0" stroke="#3a2e20" stroke-width="0.9" stroke-linecap="butt"/>
<polygon points="392.0,390.0 412.0,378.0 419.0,374.0 668.0,661.0 690.0,690.0 688.0,702.0 674.0,705.0 645.0,686.0 636.0,672.0" fill="#c9c9cd" stroke="#333" stroke-width="0.8" stroke-linejoin="round" />
<polygon points="405.0,386.0 419.0,374.0 668.0,661.0 690.0,690.0 677.0,690.0" fill="#d3d3d7" stroke="none" stroke-width="1" stroke-linejoin="round" />
<line x1="405.0" y1="386.0" x2="677.0" y2="690.0" stroke="#3a3a3a" stroke-width="0.9" stroke-linecap="round"/>
<line x1="670.0" y1="705.0" x2="670.0" y2="720.0" stroke="#222" stroke-width="2.5" stroke-linecap="round"/>
<polygon points="663.0,719.0 678.0,719.0 675.0,723.0 660.0,723.0" fill="#5aa0a0" stroke="none" stroke-width="1" stroke-linejoin="round" />
<polygon points="402.0,386.0 403.5,403.6 238.5,469.6 237.0,452.0" fill="#b2824c" stroke="none" stroke-width="1" stroke-linejoin="round" />
<polygon points="403.5,403.6 422.8,409.4 260.1,478.7 238.5,469.6" fill="#c6955a" stroke="none" stroke-width="1" stroke-linejoin="round" />
<polygon points="422.8,409.4 424.3,427.0 261.5,496.2 260.1,478.7" fill="#b2824c" stroke="none" stroke-width="1" stroke-linejoin="round" />
<polygon points="424.3,427.0 443.7,432.8 283.2,505.3 261.5,496.2" fill="#c6955a" stroke="none" stroke-width="1" stroke-linejoin="round" />
<polygon points="443.7,432.8 445.1,450.4 284.6,522.9 283.2,505.3" fill="#b2824c" stroke="none" stroke-width="1" stroke-linejoin="round" />
<polygon points="445.1,450.4 464.5,456.2 306.2,532.0 284.6,522.9" fill="#c6955a" stroke="none" stroke-width="1" stroke-linejoin="round" />
<polygon points="464.5,456.2 466.0,473.8 307.7,549.6 306.2,532.0" fill="#b2824c" stroke="none" stroke-width="1" stroke-linejoin="round" />
<polygon points="466.0,473.8 485.3,479.7 329.3,558.7 307.7,549.6" fill="#c6955a" stroke="none" stroke-width="1" stroke-linejoin="round" />
<polygon points="485.3,479.7 486.8,497.2 330.8,576.2 329.3,558.7" fill="#b2824c" stroke="none" stroke-width="1" stroke-linejoin="round" />
<polygon points="486.8,497.2 506.2,503.1 352.4,585.3 330.8,576.2" fill="#c6955a" stroke="none" stroke-width="1" stroke-linejoin="round" />
<polygon points="506.2,503.1 507.6,520.6 353.9,602.9 352.4,585.3" fill="#b2824c" stroke="none" stroke-width="1" stroke-linejoin="round" />
<polygon points="507.6,520.6 527.0,526.5 375.5,612.0 353.9,602.9" fill="#c6955a" stroke="none" stroke-width="1" stroke-linejoin="round" />
<polygon points="527.0,526.5 528.5,544.1 377.0,629.6 375.5,612.0" fill="#b2824c" stroke="none" stroke-width="1" stroke-linejoin="round" />
<polygon points="528.5,544.1 547.8,549.9 398.6,638.7 377.0,629.6" fill="#c6955a" stroke="none" stroke-width="1" stroke-linejoin="round" />
<polygon points="547.8,549.9 549.3,567.5 400.0,656.2 398.6,638.7" fill="#b2824c" stroke="none" stroke-width="1" stroke-linejoin="round" />
<polygon points="549.3,567.5 568.7,573.3 421.7,665.3 400.0,656.2" fill="#c6955a" stroke="none" stroke-width="1" stroke-linejoin="round" />
<polygon points="568.7,573.3 570.1,590.9 423.1,682.9 421.7,665.3" fill="#b2824c" stroke="none" stroke-width="1" stroke-linejoin="round" />
<polygon points="570.1,590.9 589.5,596.8 444.8,692.0 423.1,682.9" fill="#c6955a" stroke="none" stroke-width="1" stroke-linejoin="round" />
<polygon points="589.5,596.8 591.0,614.3 446.2,709.6 444.8,692.0" fill="#b2824c" stroke="none" stroke-width="1" stroke-linejoin="round" />
<polygon points="591.0,614.3 610.3,620.2 467.8,718.7 446.2,709.6" fill="#c6955a" stroke="none" stroke-width="1" stroke-linejoin="round" />
<polygon points="610.3,620.2 611.8,637.7 469.3,736.2 467.8,718.7" fill="#b2824c" stroke="none" stroke-width="1" stroke-linejoin="round" />
<polygon points="611.8,637.7 631.2,643.6 490.9,745.3 469.3,736.2" fill="#c6955a" stroke="none" stroke-width="1" stroke-linejoin="round" />
<polygon points="631.2,643.6 632.6,661.1 492.4,762.9 490.9,745.3" fill="#b2824c" stroke="none" stroke-width="1" stroke-linejoin="round" />
<polygon points="632.6,661.1 652.0,667.0 514.0,772.0 492.4,762.9" fill="#c6955a" stroke="none" stroke-width="1" stroke-linejoin="round" />
<polygon points="652.0,667.0 652.0,675.0 514.0,780.0 514.0,772.0" fill="#b2824c" stroke="none" stroke-width="1" stroke-linejoin="round" />
<line x1="402.0" y1="386.0" x2="237.0" y2="452.0" stroke="#a84424" stroke-width="2.0" stroke-linecap="butt"/>
<line x1="403.5" y1="403.6" x2="238.5" y2="469.6" stroke="#6a5030" stroke-width="3.6" stroke-linecap="butt"/>
<line x1="403.5" y1="402.3" x2="238.5" y2="468.3" stroke="#241a10" stroke-width="1.1" stroke-linecap="butt"/>
<line x1="403.5" y1="404.9" x2="238.5" y2="470.9" stroke="#241a10" stroke-width="1.1" stroke-linecap="butt"/>
<line x1="402.0" y1="386.0" x2="403.5" y2="403.6" stroke="#3a2e20" stroke-width="0.9" stroke-linecap="butt"/>
<line x1="422.8" y1="409.4" x2="260.1" y2="478.7" stroke="#a84424" stroke-width="2.0" stroke-linecap="butt"/>
<line x1="424.3" y1="427.0" x2="261.5" y2="496.2" stroke="#6a5030" stroke-width="3.6" stroke-linecap="butt"/>
<line x1="424.3" y1="425.7" x2="261.5" y2="494.9" stroke="#241a10" stroke-width="1.1" stroke-linecap="butt"/>
<line x1="424.3" y1="428.3" x2="261.5" y2="497.5" stroke="#241a10" stroke-width="1.1" stroke-linecap="butt"/>
<line x1="422.8" y1="409.4" x2="424.3" y2="427.0" stroke="#3a2e20" stroke-width="0.9" stroke-linecap="butt"/>
<line x1="443.7" y1="432.8" x2="283.2" y2="505.3" stroke="#a84424" stroke-width="2.0" stroke-linecap="butt"/>
<line x1="445.1" y1="450.4" x2="284.6" y2="522.9" stroke="#6a5030" stroke-width="3.6" stroke-linecap="butt"/>
<line x1="445.1" y1="449.1" x2="284.6" y2="521.6" stroke="#241a10" stroke-width="1.1" stroke-linecap="butt"/>
<line x1="445.1" y1="451.7" x2="284.6" y2="524.2" stroke="#241a10" stroke-width="1.1" stroke-linecap="butt"/>
<line x1="443.7" y1="432.8" x2="445.1" y2="450.4" stroke="#3a2e20" stroke-width="0.9" stroke-linecap="butt"/>
<line x1="464.5" y1="456.2" x2="306.2" y2="532.0" stroke="#a84424" stroke-width="2.0" stroke-linecap="butt"/>
<line x1="466.0" y1="473.8" x2="307.7" y2="549.6" stroke="#6a5030" stroke-width="3.6" stroke-linecap="butt"/>
<line x1="466.0" y1="472.5" x2="307.7" y2="548.3" stroke="#241a10" stroke-width="1.1" stroke-linecap="butt"/>
<line x1="466.0" y1="475.1" x2="307.7" y2="550.9" stroke="#241a10" stroke-width="1.1" stroke-linecap="butt"/>
<line x1="464.5" y1="456.2" x2="466.0" y2="473.8" stroke="#3a2e20" stroke-width="0.9" stroke-linecap="butt"/>
<line x1="485.3" y1="479.7" x2="329.3" y2="558.7" stroke="#a84424" stroke-width="2.0" stroke-linecap="butt"/>
<line x1="486.8" y1="497.2" x2="330.8" y2="576.2" stroke="#6a5030" stroke-width="3.6" stroke-linecap="butt"/>
<line x1="486.8" y1="495.9" x2="330.8" y2="574.9" stroke="#241a10" stroke-width="1.1" stroke-linecap="butt"/>
<line x1="486.8" y1="498.5" x2="330.8" y2="577.5" stroke="#241a10" stroke-width="1.1" stroke-linecap="butt"/>
<line x1="485.3" y1="479.7" x2="486.8" y2="497.2" stroke="#3a2e20" stroke-width="0.9" stroke-linecap="butt"/>
<line x1="506.2" y1="503.1" x2="352.4" y2="585.3" stroke="#a84424" stroke-width="2.0" stroke-linecap="butt"/>
<line x1="507.6" y1="520.6" x2="353.9" y2="602.9" stroke="#6a5030" stroke-width="3.6" stroke-linecap="butt"/>
<line x1="507.6" y1="519.3" x2="353.9" y2="601.6" stroke="#241a10" stroke-width="1.1" stroke-linecap="butt"/>
<line x1="507.6" y1="521.9" x2="353.9" y2="604.2" stroke="#241a10" stroke-width="1.1" stroke-linecap="butt"/>
<line x1="506.2" y1="503.1" x2="507.6" y2="520.6" stroke="#3a2e20" stroke-width="0.9" stroke-linecap="butt"/>
<line x1="527.0" y1="526.5" x2="375.5" y2="612.0" stroke="#a84424" stroke-width="2.0" stroke-linecap="butt"/>
<line x1="528.5" y1="544.1" x2="377.0" y2="629.6" stroke="#6a5030" stroke-width="3.6" stroke-linecap="butt"/>
<line x1="528.5" y1="542.8" x2="377.0" y2="628.3" stroke="#241a10" stroke-width="1.1" stroke-linecap="butt"/>
<line x1="528.5" y1="545.4" x2="377.0" y2="630.9" stroke="#241a10" stroke-width="1.1" stroke-linecap="butt"/>
<line x1="527.0" y1="526.5" x2="528.5" y2="544.1" stroke="#3a2e20" stroke-width="0.9" stroke-linecap="butt"/>
<line x1="547.8" y1="549.9" x2="398.6" y2="638.7" stroke="#a84424" stroke-width="2.0" stroke-linecap="butt"/>
<line x1="549.3" y1="567.5" x2="400.0" y2="656.2" stroke="#6a5030" stroke-width="3.6" stroke-linecap="butt"/>
<line x1="549.3" y1="566.2" x2="400.0" y2="654.9" stroke="#241a10" stroke-width="1.1" stroke-linecap="butt"/>
<line x1="549.3" y1="568.8" x2="400.0" y2="657.5" stroke="#241a10" stroke-width="1.1" stroke-linecap="butt"/>
<line x1="547.8" y1="549.9" x2="549.3" y2="567.5" stroke="#3a2e20" stroke-width="0.9" stroke-linecap="butt"/>
<line x1="568.7" y1="573.3" x2="421.7" y2="665.3" stroke="#a84424" stroke-width="2.0" stroke-linecap="butt"/>
<line x1="570.1" y1="590.9" x2="423.1" y2="682.9" stroke="#6a5030" stroke-width="3.6" stroke-linecap="butt"/>
<line x1="570.1" y1="589.6" x2="423.1" y2="681.6" stroke="#241a10" stroke-width="1.1" stroke-linecap="butt"/>
<line x1="570.1" y1="592.2" x2="423.1" y2="684.2" stroke="#241a10" stroke-width="1.1" stroke-linecap="butt"/>
<line x1="568.7" y1="573.3" x2="570.1" y2="590.9" stroke="#3a2e20" stroke-width="0.9" stroke-linecap="butt"/>
<line x1="589.5" y1="596.8" x2="444.8" y2="692.0" stroke="#a84424" stroke-width="2.0" stroke-linecap="butt"/>
<line x1="591.0" y1="614.3" x2="446.2" y2="709.6" stroke="#6a5030" stroke-width="3.6" stroke-linecap="butt"/>
<line x1="591.0" y1="613.0" x2="446.2" y2="708.3" stroke="#241a10" stroke-width="1.1" stroke-linecap="butt"/>
<line x1="591.0" y1="615.6" x2="446.2" y2="710.9" stroke="#241a10" stroke-width="1.1" stroke-linecap="butt"/>
<line x1="589.5" y1="596.8" x2="591.0" y2="614.3" stroke="#3a2e20" stroke-width="0.9" stroke-linecap="butt"/>
<line x1="610.3" y1="620.2" x2="467.8" y2="718.7" stroke="#a84424" stroke-width="2.0" stroke-linecap="butt"/>
<line x1="611.8" y1="637.7" x2="469.3" y2="736.2" stroke="#6a5030" stroke-width="3.6" stroke-linecap="butt"/>
<line x1="611.8" y1="636.4" x2="469.3" y2="734.9" stroke="#241a10" stroke-width="1.1" stroke-linecap="butt"/>
<line x1="611.8" y1="639.0" x2="469.3" y2="737.5" stroke="#241a10" stroke-width="1.1" stroke-linecap="butt"/>
<line x1="610.3" y1="620.2" x2="611.8" y2="637.7" stroke="#3a2e20" stroke-width="0.9" stroke-linecap="butt"/>
<line x1="631.2" y1="643.6" x2="490.9" y2="745.3" stroke="#a84424" stroke-width="2.0" stroke-linecap="butt"/>
<line x1="632.6" y1="661.1" x2="492.4" y2="762.9" stroke="#6a5030" stroke-width="3.6" stroke-linecap="butt"/>
<line x1="632.6" y1="659.8" x2="492.4" y2="761.6" stroke="#241a10" stroke-width="1.1" stroke-linecap="butt"/>
<line x1="632.6" y1="662.4" x2="492.4" y2="764.2" stroke="#241a10" stroke-width="1.1" stroke-linecap="butt"/>
<line x1="631.2" y1="643.6" x2="632.6" y2="661.1" stroke="#3a2e20" stroke-width="0.9" stroke-linecap="butt"/>
<line x1="652.0" y1="667.0" x2="514.0" y2="772.0" stroke="#a84424" stroke-width="2.0" stroke-linecap="butt"/>
<line x1="652.0" y1="675.0" x2="514.0" y2="780.0" stroke="#6a5030" stroke-width="3.6" stroke-linecap="butt"/>
<line x1="652.0" y1="673.7" x2="514.0" y2="778.7" stroke="#241a10" stroke-width="1.1" stroke-linecap="butt"/>
<line x1="652.0" y1="676.3" x2="514.0" y2="781.3" stroke="#241a10" stroke-width="1.1" stroke-linecap="butt"/>
<line x1="652.0" y1="667.0" x2="652.0" y2="675.0" stroke="#3a2e20" stroke-width="0.9" stroke-linecap="butt"/>
<polygon points="219.0,457.0 237.0,452.0 514.0,772.0 530.0,803.0 519.0,818.0 491.0,809.0" fill="#d2d2d6" stroke="#333" stroke-width="0.8" stroke-linejoin="round" />
<polygon points="219.0,457.0 520.0,801.0 519.0,818.0 491.0,809.0 215.0,482.0" fill="#bdbdc1" stroke="#333" stroke-width="0.9" stroke-linejoin="round" />
<polygon points="519.0,803.0 530.0,800.0 530.0,812.0 519.0,818.0" fill="#d5d5d9" stroke="#333" stroke-width="0.8" stroke-linejoin="round" />
<line x1="510.0" y1="818.0" x2="510.0" y2="834.0" stroke="#222" stroke-width="2.5" stroke-linecap="round"/>
<line x1="414.0" y1="200.0" x2="541.0" y2="221.0" stroke="#0e140e" stroke-width="3.6" stroke-linecap="butt"/>
<line x1="414.0" y1="225.0" x2="541.0" y2="246.0" stroke="#0e140e" stroke-width="3.6" stroke-linecap="butt"/>
<line x1="414.0" y1="238.0" x2="541.0" y2="258.0" stroke="#0e140e" stroke-width="3.6" stroke-linecap="butt"/>
<line x1="414.0" y1="250.0" x2="541.0" y2="271.0" stroke="#0e140e" stroke-width="3.6" stroke-linecap="butt"/>
<line x1="414.0" y1="263.0" x2="541.0" y2="284.0" stroke="#0e140e" stroke-width="3.6" stroke-linecap="butt"/>
<line x1="414.0" y1="276.0" x2="541.0" y2="297.0" stroke="#0e140e" stroke-width="3.6" stroke-linecap="butt"/>
<line x1="408.0" y1="209.0" x2="538.0" y2="232.0" stroke="#0e140e" stroke-width="6.5" stroke-linecap="round"/>
<path d="M419,286 L412,193 Q412,190 416,191 L536,209 Q541,210 541,217 L544,311" stroke="#0e140e" stroke-width="4.5" fill="none" stroke-linecap="round" stroke-linejoin="round"/>
<line x1="475.0" y1="201.0" x2="480.0" y2="298.0" stroke="#0e140e" stroke-width="5" stroke-linecap="round"/>
<line x1="548.0" y1="212.0" x2="550.0" y2="313.0" stroke="#0e140e" stroke-width="5" stroke-linecap="round"/>
<path d="M551.0,224.0 L558.0,225.0 Q562.0,226.0 565.0,230.0 L805.0,504.0" stroke="#0e140e" stroke-width="3.6" fill="none" stroke-linecap="round" stroke-linejoin="round"/>
<path d="M551.0,236.8 L558.0,237.8 Q562.0,238.8 565.0,242.8 L805.0,515.3" stroke="#0e140e" stroke-width="3.6" fill="none" stroke-linecap="round" stroke-linejoin="round"/>
<path d="M551.0,249.6 L558.0,250.6 Q562.0,251.6 565.0,255.6 L805.0,526.6" stroke="#0e140e" stroke-width="3.6" fill="none" stroke-linecap="round" stroke-linejoin="round"/>
<path d="M551.0,262.4 L558.0,263.4 Q562.0,264.4 565.0,268.4 L805.0,537.9" stroke="#0e140e" stroke-width="3.6" fill="none" stroke-linecap="round" stroke-linejoin="round"/>
<path d="M551.0,275.2 L558.0,276.2 Q562.0,277.2 565.0,281.2 L805.0,549.2" stroke="#0e140e" stroke-width="3.6" fill="none" stroke-linecap="round" stroke-linejoin="round"/>
<path d="M551.0,288.0 L558.0,289.0 Q562.0,290.0 565.0,294.0 L805.0,560.5" stroke="#0e140e" stroke-width="3.6" fill="none" stroke-linecap="round" stroke-linejoin="round"/>
<path d="M551.0,300.8 L558.0,301.8 Q562.0,302.8 565.0,306.8 L805.0,571.8" stroke="#0e140e" stroke-width="3.6" fill="none" stroke-linecap="round" stroke-linejoin="round"/>
<path d="M551.0,313.6 L558.0,314.6 Q562.0,315.6 565.0,319.6 L805.0,583.1" stroke="#0e140e" stroke-width="3.6" fill="none" stroke-linecap="round" stroke-linejoin="round"/>
<line x1="612.0" y1="286.0" x2="614.0" y2="376.0" stroke="#0f1a10" stroke-width="5.2" stroke-linecap="round"/>
<line x1="676.0" y1="356.0" x2="678.0" y2="449.0" stroke="#0f1a10" stroke-width="5.2" stroke-linecap="round"/>
<line x1="739.0" y1="424.0" x2="740.0" y2="519.0" stroke="#0f1a10" stroke-width="5.2" stroke-linecap="round"/>
<line x1="805.0" y1="495.0" x2="805.0" y2="591.0" stroke="#0f1a10" stroke-width="5.2" stroke-linecap="round"/>
<path d="M550,313 L548,215 Q549,211 554,214 L805,495" stroke="#0e140e" stroke-width="4.2" fill="none" stroke-linecap="round" stroke-linejoin="round"/>
<path d="M805,501 L847,515 Q855,518 855,526 L855,547 Q854,555 847,553 L807,538" stroke="#142a16" stroke-width="5.5" fill="none" stroke-linecap="round" stroke-linejoin="round"/>
<line x1="254.0" y1="251.0" x2="388.0" y2="275.0" stroke="#0e140e" stroke-width="3.6" stroke-linecap="butt"/>
<line x1="254.0" y1="278.0" x2="388.0" y2="302.0" stroke="#0e140e" stroke-width="3.6" stroke-linecap="butt"/>
<line x1="254.0" y1="292.0" x2="388.0" y2="316.0" stroke="#0e140e" stroke-width="3.6" stroke-linecap="butt"/>
<line x1="254.0" y1="305.0" x2="388.0" y2="330.0" stroke="#0e140e" stroke-width="3.6" stroke-linecap="butt"/>
<line x1="254.0" y1="319.0" x2="388.0" y2="345.0" stroke="#0e140e" stroke-width="3.6" stroke-linecap="butt"/>
<line x1="254.0" y1="332.0" x2="388.0" y2="360.0" stroke="#0e140e" stroke-width="3.6" stroke-linecap="butt"/>
<line x1="247.0" y1="260.0" x2="384.0" y2="287.0" stroke="#0e140e" stroke-width="6.5" stroke-linecap="round"/>
<path d="M263,343 L252,241 Q252,238 256,239 L383,263 Q387,264 387,270 L393,374" stroke="#0e140e" stroke-width="4.5" fill="none" stroke-linecap="round" stroke-linejoin="round"/>
<line x1="318.0" y1="251.0" x2="327.0" y2="359.0" stroke="#0e140e" stroke-width="5" stroke-linecap="round"/>
<line x1="392.0" y1="266.0" x2="399.0" y2="375.0" stroke="#0e140e" stroke-width="5" stroke-linecap="round"/>
<path d="M395.0,281.0 L402.0,282.0 Q406.0,283.0 409.0,287.0 L671.0,592.0" stroke="#0e140e" stroke-width="3.6" fill="none" stroke-linecap="round" stroke-linejoin="round"/>
<path d="M395.0,294.5 L402.0,295.5 Q406.0,296.5 409.0,300.5 L671.0,603.0" stroke="#0e140e" stroke-width="3.6" fill="none" stroke-linecap="round" stroke-linejoin="round"/>
<path d="M395.0,308.0 L402.0,309.0 Q406.0,310.0 409.0,314.0 L671.0,614.0" stroke="#0e140e" stroke-width="3.6" fill="none" stroke-linecap="round" stroke-linejoin="round"/>
<path d="M395.0,321.5 L402.0,322.5 Q406.0,323.5 409.0,327.5 L671.0,625.0" stroke="#0e140e" stroke-width="3.6" fill="none" stroke-linecap="round" stroke-linejoin="round"/>
<path d="M395.0,335.0 L402.0,336.0 Q406.0,337.0 409.0,341.0 L671.0,636.0" stroke="#0e140e" stroke-width="3.6" fill="none" stroke-linecap="round" stroke-linejoin="round"/>
<path d="M395.0,348.5 L402.0,349.5 Q406.0,350.5 409.0,354.5 L671.0,647.0" stroke="#0e140e" stroke-width="3.6" fill="none" stroke-linecap="round" stroke-linejoin="round"/>
<path d="M395.0,362.0 L402.0,363.0 Q406.0,364.0 409.0,368.0 L671.0,658.0" stroke="#0e140e" stroke-width="3.6" fill="none" stroke-linecap="round" stroke-linejoin="round"/>
<line x1="463.0" y1="344.0" x2="467.0" y2="445.0" stroke="#0f1a10" stroke-width="5.2" stroke-linecap="round"/>
<line x1="532.0" y1="424.0" x2="537.0" y2="525.0" stroke="#0f1a10" stroke-width="5.2" stroke-linecap="round"/>
<line x1="600.0" y1="503.0" x2="605.0" y2="602.0" stroke="#0f1a10" stroke-width="5.2" stroke-linecap="round"/>
<line x1="669.0" y1="580.0" x2="673.0" y2="682.0" stroke="#0f1a10" stroke-width="5.2" stroke-linecap="round"/>
<path d="M399,375 L392,269 Q393,265 398,268 L671,582" stroke="#0e140e" stroke-width="4.2" fill="none" stroke-linecap="round" stroke-linejoin="round"/>
<line x1="398.0" y1="287.0" x2="671.0" y2="603.0" stroke="#1d3a20" stroke-width="5.5" stroke-linecap="round"/>
<path d="M670,580 L718,603 Q726,607 726,615 L726,638 Q725,646 718,644 L674,627" stroke="#142a16" stroke-width="5.5" fill="none" stroke-linecap="round" stroke-linejoin="round"/>
<line x1="68.0" y1="328.0" x2="204.0" y2="355.0" stroke="#0e140e" stroke-width="3.6" stroke-linecap="butt"/>
<line x1="68.0" y1="342.0" x2="204.0" y2="371.0" stroke="#0e140e" stroke-width="3.6" stroke-linecap="butt"/>
<line x1="68.0" y1="356.0" x2="204.0" y2="385.0" stroke="#0e140e" stroke-width="3.6" stroke-linecap="butt"/>
<line x1="68.0" y1="371.0" x2="204.0" y2="400.0" stroke="#0e140e" stroke-width="3.6" stroke-linecap="butt"/>
<line x1="68.0" y1="384.0" x2="204.0" y2="415.0" stroke="#0e140e" stroke-width="3.6" stroke-linecap="butt"/>
<line x1="68.0" y1="399.0" x2="204.0" y2="430.0" stroke="#0e140e" stroke-width="3.6" stroke-linecap="butt"/>
<line x1="66.0" y1="318.0" x2="198.0" y2="345.0" stroke="#0e140e" stroke-width="6.5" stroke-linecap="round"/>
<path d="M75,413 L59,302 Q59,299 63,300 L192,328 Q200,329 200,337 L211,451" stroke="#0e140e" stroke-width="4.5" fill="none" stroke-linecap="round" stroke-linejoin="round"/>
<line x1="127.0" y1="317.0" x2="141.0" y2="431.0" stroke="#0e140e" stroke-width="5" stroke-linecap="round"/>
<line x1="207.0" y1="331.0" x2="217.0" y2="451.0" stroke="#0e140e" stroke-width="5" stroke-linecap="round"/>
<path d="M210.0,355.0 L217.0,356.0 Q221.0,357.0 224.0,361.0 L516.0,707.0" stroke="#0e140e" stroke-width="3.6" fill="none" stroke-linecap="round" stroke-linejoin="round"/>
<path d="M210.0,367.8 L217.0,368.8 Q221.0,369.8 224.0,373.8 L516.0,718.3" stroke="#0e140e" stroke-width="3.6" fill="none" stroke-linecap="round" stroke-linejoin="round"/>
<path d="M210.0,380.6 L217.0,381.6 Q221.0,382.6 224.0,386.6 L516.0,729.6" stroke="#0e140e" stroke-width="3.6" fill="none" stroke-linecap="round" stroke-linejoin="round"/>
<path d="M210.0,393.4 L217.0,394.4 Q221.0,395.4 224.0,399.4 L516.0,740.9" stroke="#0e140e" stroke-width="3.6" fill="none" stroke-linecap="round" stroke-linejoin="round"/>
<path d="M210.0,406.2 L217.0,407.2 Q221.0,408.2 224.0,412.2 L516.0,752.2" stroke="#0e140e" stroke-width="3.6" fill="none" stroke-linecap="round" stroke-linejoin="round"/>
<path d="M210.0,419.0 L217.0,420.0 Q221.0,421.0 224.0,425.0 L516.0,763.5" stroke="#0e140e" stroke-width="3.6" fill="none" stroke-linecap="round" stroke-linejoin="round"/>
<path d="M210.0,431.8 L217.0,432.8 Q221.0,433.8 224.0,437.8 L516.0,774.8" stroke="#0e140e" stroke-width="3.6" fill="none" stroke-linecap="round" stroke-linejoin="round"/>
<line x1="283.0" y1="420.0" x2="289.0" y2="530.0" stroke="#0f1a10" stroke-width="5.2" stroke-linecap="round"/>
<line x1="360.0" y1="510.0" x2="366.0" y2="619.0" stroke="#0f1a10" stroke-width="5.2" stroke-linecap="round"/>
<line x1="434.0" y1="597.0" x2="439.0" y2="706.0" stroke="#0f1a10" stroke-width="5.2" stroke-linecap="round"/>
<line x1="510.0" y1="686.0" x2="514.0" y2="794.0" stroke="#0f1a10" stroke-width="5.2" stroke-linecap="round"/>
<path d="M217,451 L207,335 Q208,331 213,334 L516,696" stroke="#0e140e" stroke-width="5" fill="none" stroke-linecap="round" stroke-linejoin="round"/>
<path d="M213,337 L517,700" stroke="#12200f" stroke-width="11" fill="none" stroke-linecap="round" stroke-linejoin="round"/>
<path d="M214,337 L517,700" stroke="#21402a" stroke-width="3" fill="none" stroke-linecap="round" stroke-linejoin="round"/>
<path d="M520,699 L558,709 Q566,713 566,721 L566,749 Q565,757 557,755 L528,743 L514,728" stroke="#142a16" stroke-width="5.5" fill="none" stroke-linecap="round" stroke-linejoin="round"/>
<line x1="207.0" y1="336.0" x2="213.0" y2="451.0" stroke="#101c10" stroke-width="10" stroke-linecap="round"/>
<line x1="207" y1="338" x2="213" y2="449" stroke="#263626" stroke-width="2" stroke-dasharray="1.5 3"/>
<line x1="248.0" y1="297.0" x2="251.0" y2="340.0" stroke="#5a88cc" stroke-width="5.5" stroke-linecap="round"/>
<line x1="216.0" y1="336.0" x2="248.0" y2="344.0" stroke="#e08a84" stroke-width="3.5" stroke-linecap="round"/>
<line x1="215.0" y1="358.0" x2="253.0" y2="344.0" stroke="#3c9a3c" stroke-width="4.5" stroke-linecap="round"/>
<path d="M214,322 l12,12 M226,322 l-12,12" stroke="#e89090" stroke-width="1.2" fill="none" stroke-linecap="round" stroke-linejoin="round"/>
<path d="M245,283 h8 l-8,8 h8" stroke="#6a90d0" stroke-width="1.1" fill="none" stroke-linecap="round" stroke-linejoin="round"/>
</svg>
<div class="a" style="left:905px;top:201px;width:220px;height:27px;border:1.5px solid #4a4a4a;border-radius:6px;background:linear-gradient(#fdfdfd,#ececef)"></div>
<div class="t" style="left:924px;top:205px;font-size:16px;line-height:18px;color:#222">Miscellaneous</div>
<svg style="left:1040px;top:204px" width="84" height="20">
 <rect x="11.5" y="1.5" width="3" height="4" fill="#6e6e6e" transform="rotate(0 13 10)"/><rect x="11.5" y="1.5" width="3" height="4" fill="#6e6e6e" transform="rotate(45 13 10)"/><rect x="11.5" y="1.5" width="3" height="4" fill="#6e6e6e" transform="rotate(90 13 10)"/><rect x="11.5" y="1.5" width="3" height="4" fill="#6e6e6e" transform="rotate(135 13 10)"/><rect x="11.5" y="1.5" width="3" height="4" fill="#6e6e6e" transform="rotate(180 13 10)"/><rect x="11.5" y="1.5" width="3" height="4" fill="#6e6e6e" transform="rotate(225 13 10)"/><rect x="11.5" y="1.5" width="3" height="4" fill="#6e6e6e" transform="rotate(270 13 10)"/><rect x="11.5" y="1.5" width="3" height="4" fill="#6e6e6e" transform="rotate(315 13 10)"/><circle cx="13" cy="10" r="6" fill="#6e6e6e"/><circle cx="13" cy="10" r="4.6" fill="#f4f4f4"/><circle cx="13" cy="10" r="2.6" fill="none" stroke="#6e6e6e" stroke-width="1.4"/>
 <rect x="30" y="1" width="5" height="9" rx="2" fill="#8a8a8a"/><rect x="31.5" y="10" width="2" height="7" fill="#8a8a8a"/>
 <rect x="45" y="8" width="15" height="3.5" fill="#888"/>
 <path d="M66 3l14 14M80 3l-14 14" stroke="#888" stroke-width="2.6"/>
</svg>
<div class="ib" style="top:232px"></div>
<div class="ib" style="top:272px"></div>
<div class="ib" style="top:312px"></div>
<div class="ib" style="top:352px"></div>
<div class="ib" style="top:392px"></div>
<div class="ib" style="top:432px"></div>
<div class="ib" style="top:472px"></div>
<div class="ib" style="top:512px"></div>
<div class="ib" style="top:552px"></div>
<div class="ib" style="top:592px;background:linear-gradient(#8fb6e4,#4e86c8);border-color:#3a5f8f"></div>
<div class="ib" style="top:632px"></div>
<div class="ib" style="top:672px"></div>
<svg style="left:905px;top:232px" width="35" height="35"><path d="M17 5l3.5 7 7.5 1-5.5 5 1.5 7.5-7-3.5-7 3.5 1.5-7.5-5.5-5 7.5-1z" fill="#8a8a8a" stroke="#666"/></svg>
<svg style="left:905px;top:272px" width="35" height="35"><rect x="12" y="5" width="11" height="14" fill="#ccc" stroke="#777"/><rect x="6" y="17" width="23" height="6" fill="#aaa" stroke="#777"/><rect x="14" y="23" width="7" height="5" fill="#bbb" stroke="#777"/></svg>
<svg style="left:905px;top:312px" width="35" height="35"><path d="M8 4v27M8 10h10M8 26h10M18 6v24M18 12h10M18 22h10" stroke="#777" stroke-width="2" fill="none"/></svg>
<svg style="left:905px;top:352px" width="35" height="35"><path d="M4 22l13-14 14 14M4 30l13-14 14 14" stroke="#777" stroke-width="2" fill="none"/></svg>
<svg style="left:905px;top:392px" width="35" height="35"><path d="M8 5v26M12 10h16M12 18h16M12 26h16" stroke="#777" stroke-width="2" fill="none"/><circle cx="8" cy="18" r="2" fill="#555"/></svg>
<svg style="left:905px;top:432px" width="35" height="35"><path d="M8 5v26h18M12 24l14-14" stroke="#777" stroke-width="2" fill="none"/><rect x="12" y="10" width="12" height="12" fill="#bbb"/></svg>
<svg style="left:905px;top:472px" width="35" height="35"><path d="M10 5v26M14 8v20M14 8h12M14 18h12M14 28h12" stroke="#777" stroke-width="2" fill="none"/></svg>
<svg style="left:905px;top:512px" width="35" height="35"><path d="M8 5v26M8 18h20" stroke="#777" stroke-width="2"/><rect x="14" y="13" width="12" height="10" fill="#bbb" stroke="#777"/></svg>
<svg style="left:905px;top:552px" width="35" height="35"><path d="M4 4l28 28M32 4L4 32M18 4v28" stroke="#777" stroke-width="2"/></svg>
<svg style="left:905px;top:592px" width="35" height="35"><path d="M4 6h28M4 14h28M6 6l8 8 8-8 8 8M6 28V18h14v4H10v6z" stroke="#333" stroke-width="1.5" fill="#e8904a"/></svg>
<svg style="left:905px;top:632px" width="35" height="35"><path d="M6 10l6-5h12l6 5-6 5H12zM6 28l6-5h12l6 5" stroke="#333" stroke-width="2" fill="none"/></svg>
<svg style="left:905px;top:672px" width="35" height="35"><path d="M3 22l14-14h16L19 22z" fill="#bbb" stroke="#777"/><path d="M8 10l16 16M24 10L8 26" stroke="#555" stroke-width="2"/></svg>
<div class="a" style="left:946px;top:233px;width:178px;height:573px;background:#f2f2f5;border-radius:6px;box-shadow:0 0 1px #ccc"></div>
<div class="a" style="left:1120px;top:240px;width:2px;height:316px;background:#b8b8bc"></div>
<div class="btn" style="top:242px"><span>Stair Anchor Base Plate</span></div>
<svg style="left:959px;top:245px" width="28" height="29"><rect x="1" y="1" width="26" height="27" rx="5" fill="#e3e4e9"/><path d="M3 20V12l8-9" stroke="#333" stroke-width="1.4" fill="none"/><path d="M16 22l8-9" stroke="#333" stroke-width="1.4"/><rect x="2" y="21" width="24" height="4" fill="#e8843c"/><path d="M7 21v4M13 21v4M19 21v4" stroke="#fff" stroke-width="1"/></svg>
<div class="btn" style="top:282px"><span>Stair Anchor Angle</span></div>
<svg style="left:959px;top:285px" width="28" height="29"><rect x="1" y="1" width="26" height="27" rx="5" fill="#e3e4e9"/><path d="M3 13l9-10" stroke="#333" stroke-width="1.4"/><rect x="7" y="13" width="14" height="12" fill="#e8843c"/><circle cx="11" cy="17" r="1.3" fill="#333"/><circle cx="17" cy="17" r="1.3" fill="#333"/><circle cx="11" cy="22" r="1.3" fill="#333"/><circle cx="17" cy="22" r="1.3" fill="#333"/></svg>
<div class="btn" style="top:322px"><span>Railing joint handrail</span></div>
<svg style="left:959px;top:325px" width="28" height="29"><rect x="1" y="1" width="26" height="27" rx="5" fill="#e3e4e9"/><path d="M3 18l8-9h14" stroke="#e8843c" stroke-width="5" fill="none"/><path d="M5 24l8-9h12" stroke="#333" stroke-width="1.5" fill="none"/><path d="M3 27l9-10h13" stroke="#9a9a9a" stroke-width="1.2" fill="none"/></svg>
<div class="btn" style="top:362px"><span>Stair - End Plate Wi...</span></div>
<svg style="left:959px;top:365px" width="28" height="29"><rect x="1" y="1" width="26" height="27" rx="5" fill="#e3e4e9"/><path d="M3 20l12-14" stroke="#333" stroke-width="1.4"/><path d="M8 26l12-14" stroke="#333" stroke-width="1.4"/><path d="M16 4h7v18h-7" stroke="#e8843c" stroke-width="2.6" fill="none"/></svg>
<div class="btn" style="top:402px"><span>Stair - Angle at the top</span></div>
<svg style="left:959px;top:405px" width="28" height="29"><rect x="1" y="1" width="26" height="27" rx="5" fill="#e3e4e9"/><path d="M3 18l10-12M6 26l10-12" stroke="#333" stroke-width="1.4"/><rect x="10" y="8" width="5" height="12" fill="#e8843c"/><path d="M23 5h-5v19h5" stroke="#e8843c" stroke-width="2.6" fill="none"/><circle cx="12.5" cy="11" r="1" fill="#333"/><circle cx="12.5" cy="17" r="1" fill="#333"/></svg>
<div class="btn" style="top:442px"><span>Railing post connection</span></div>
<svg style="left:959px;top:445px" width="28" height="29"><rect x="1" y="1" width="26" height="27" rx="5" fill="#e3e4e9"/><path d="M9 3v13l-6 7" stroke="#e8843c" stroke-width="4" fill="none"/><path d="M4 27l20-20" stroke="#333" stroke-width="1.6"/><rect x="12" y="6" width="5" height="12" fill="#e8843c" transform="rotate(40 14 12)"/></svg>
<div class="btn" style="top:482px"><span>End plate with bolts</span></div>
<svg style="left:959px;top:485px" width="28" height="29"><rect x="1" y="1" width="26" height="27" rx="5" fill="#e3e4e9"/><path d="M8 2v14M14 2v14" stroke="#9a9a9a" stroke-width="1.3"/><path d="M4 24l19-17" stroke="#e8843c" stroke-width="5"/><path d="M3 20l5 6M20 4l5 6" stroke="#333" stroke-width="2"/></svg>
<div class="btn" style="top:522px"><span>Structural element ro...</span></div>
<svg style="left:959px;top:525px" width="28" height="29"><rect x="1" y="1" width="26" height="27" rx="5" fill="#e3e4e9"/><path d="M5 3v23M22 3v23" stroke="#e8843c" stroke-width="3"/><rect x="9" y="7" width="3" height="15" fill="#e8843c"/><rect x="15" y="7" width="3" height="15" fill="#e8843c"/><path d="M5 7h17M5 22h17" stroke="#e8843c" stroke-width="1.5"/></svg>
<div class="btn" style="top:562px"><span>Structural element ro...</span></div>
<svg style="left:959px;top:565px" width="28" height="29"><rect x="1" y="1" width="26" height="27" rx="5" fill="#e3e4e9"/><path d="M5 3v23M22 3v23" stroke="#e8843c" stroke-width="3"/><rect x="9" y="7" width="3" height="15" fill="#e8843c"/><rect x="15" y="7" width="3" height="15" fill="#e8843c"/><path d="M5 7h17M5 22h17" stroke="#e8843c" stroke-width="1.5"/></svg>
<div class="btn" style="top:602px"><span>Stabilizer plate</span></div>
<svg style="left:959px;top:605px" width="28" height="29"><rect x="1" y="1" width="26" height="27" rx="5" fill="#e3e4e9"/><rect x="7" y="4" width="18" height="21" fill="#e8843c"/><path d="M4 3v24" stroke="#9a9a9a" stroke-width="2"/><circle cx="19" cy="19" r="2.5" fill="none" stroke="#fff" stroke-width="1.3"/></svg>
<div class="btn" style="top:642px"><span>Joist seat</span></div>
<svg style="left:959px;top:645px" width="28" height="29"><rect x="1" y="1" width="26" height="27" rx="5" fill="#e3e4e9"/><path d="M3 5h22M3 13h22M4 12l6-6 6 6 6-6" stroke="#333" stroke-width="1.3" fill="none"/><path d="M5 15v12h3v-7h10v-3H5z" fill="#e8843c"/></svg>
<div class="btn" style="top:682px"><span>Bolting on gauge lines</span></div>
<svg style="left:959px;top:685px" width="28" height="29"><rect x="1" y="1" width="26" height="27" rx="5" fill="#e3e4e9"/><path d="M3 9h22M3 19h22M9 3v24M19 3v24" stroke="#9a9a9a" stroke-width="2.5"/><circle cx="9" cy="9" r="1.3" fill="#333"/><circle cx="19" cy="9" r="1.3" fill="#333"/><circle cx="9" cy="19" r="1.3" fill="#333"/><circle cx="19" cy="19" r="1.3" fill="#333"/></svg>
<div class="btn" style="top:722px"><span>Bolting on gauge lines,...</span></div>
<svg style="left:959px;top:725px" width="28" height="29"><rect x="1" y="1" width="26" height="27" rx="5" fill="#e3e4e9"/><path d="M3 9h22M3 19h22M7 3v24M21 3v24M12 3v24M16 3v24" stroke="#9a9a9a" stroke-width="2"/><circle cx="9.5" cy="9" r="1.3" fill="#333"/><circle cx="18.5" cy="14" r="1.3" fill="#333"/><circle cx="9.5" cy="19" r="1.3" fill="#333"/></svg>
<div class="btn" style="top:762px"><span>Embed Beam Seat</span></div>
<svg style="left:959px;top:765px" width="28" height="29"><rect x="1" y="1" width="26" height="27" rx="5" fill="#e3e4e9"/><path d="M3 6h22" stroke="#9a9a9a" stroke-width="2"/><path d="M3 12h6q3 -4 5 0q3 -4 5 0h6" stroke="#333" stroke-width="1.5" fill="none"/><rect x="3" y="15" width="22" height="5" fill="#e8843c"/><path d="M7 20v6M13 20v6M19 20v6" stroke="#333" stroke-width="1.3"/></svg>
<svg style="left:1102px;top:237px" width="18" height="18"><circle cx="8" cy="8" r="7.5" fill="#fff" stroke="#888" stroke-width="1.4"/><path d="M10 4v8l-5-4z" fill="none" stroke="#888" stroke-width="1.4"/></svg>
<div class="a" style="left:1131px;top:233px;width:374px;height:320px;background:#f0f0f4;border-radius:6px"></div>
<div class="a" style="left:1131px;top:558px;width:374px;height:248px;background:#f0f0f4;border-radius:6px"></div>
<svg style="left:0;top:0" width="1536" height="864">
<defs><linearGradient id="pg" x1="0" y1="0" x2="0" y2="1"><stop offset="0" stop-color="#fbfbfd"/><stop offset="1" stop-color="#e4e4ea"/></linearGradient><clipPath id="pc"><rect x="1141" y="243" width="353" height="299" rx="6"/></clipPath></defs>
<g clip-path="url(#pc)">
<rect x="1141" y="243" width="183" height="146" fill="url(#pg)"/>
<rect x="1327" y="243" width="167" height="146" fill="url(#pg)"/>
<rect x="1141" y="391" width="183" height="152" fill="url(#pg)"/>
<rect x="1327" y="391" width="167" height="152" fill="url(#pg)"/>
<clipPath id="q1"><rect x="1141" y="243" width="183" height="145"/></clipPath><clipPath id="q2"><rect x="1327" y="243" width="167" height="145"/></clipPath><clipPath id="q3"><rect x="1141" y="391" width="353" height="152"/></clipPath>
<g clip-path="url(#q1)">
<path d="M1193,300 L1193,392" stroke="#a8a8b0" stroke-width="5" fill="none" stroke-linecap="round" stroke-linejoin="round"/><path d="M1193,300 L1193,392" stroke="#f6f6f9" stroke-width="2.8" fill="none" stroke-linecap="round" stroke-linejoin="round"/>
<path d="M1232,262 L1232,392" stroke="#a8a8b0" stroke-width="5" fill="none" stroke-linecap="round" stroke-linejoin="round"/><path d="M1232,262 L1232,392" stroke="#f6f6f9" stroke-width="2.8" fill="none" stroke-linecap="round" stroke-linejoin="round"/>
<path d="M1261,240 L1261,392" stroke="#a8a8b0" stroke-width="5" fill="none" stroke-linecap="round" stroke-linejoin="round"/><path d="M1261,240 L1261,392" stroke="#f6f6f9" stroke-width="2.8" fill="none" stroke-linecap="round" stroke-linejoin="round"/>
<path d="M1143,363 L1213,268 L1261,242 L1275,236" stroke="#a8a8b0" stroke-width="6" fill="none" stroke-linecap="round" stroke-linejoin="round"/><path d="M1143,363 L1213,268 L1261,242 L1275,236" stroke="#f6f6f9" stroke-width="3.8" fill="none" stroke-linecap="round" stroke-linejoin="round"/>
<path d="M1175,392 L1213,341 L1279,304" stroke="#a8a8b0" stroke-width="6" fill="none" stroke-linecap="round" stroke-linejoin="round"/><path d="M1175,392 L1213,341 L1279,304" stroke="#f6f6f9" stroke-width="3.8" fill="none" stroke-linecap="round" stroke-linejoin="round"/>
<path d="M1254,378 L1282,370 L1282,392 L1254,392Z" fill="#e2e2e8" stroke="#b0b0b8"/>
</g><g clip-path="url(#q2)">
<path d="M1370,290 L1370,392" stroke="#a8a8b0" stroke-width="5" fill="none" stroke-linecap="round" stroke-linejoin="round"/><path d="M1370,290 L1370,392" stroke="#f6f6f9" stroke-width="2.8" fill="none" stroke-linecap="round" stroke-linejoin="round"/>
<path d="M1419,246 L1419,392" stroke="#a8a8b0" stroke-width="5" fill="none" stroke-linecap="round" stroke-linejoin="round"/><path d="M1419,246 L1419,392" stroke="#f6f6f9" stroke-width="2.8" fill="none" stroke-linecap="round" stroke-linejoin="round"/>
<path d="M1450,240 L1450,392" stroke="#a8a8b0" stroke-width="5" fill="none" stroke-linecap="round" stroke-linejoin="round"/><path d="M1450,240 L1450,392" stroke="#f6f6f9" stroke-width="2.8" fill="none" stroke-linecap="round" stroke-linejoin="round"/>
<path d="M1469,240 L1469,332" stroke="#a8a8b0" stroke-width="5" fill="none" stroke-linecap="round" stroke-linejoin="round"/><path d="M1469,240 L1469,332" stroke="#f6f6f9" stroke-width="2.8" fill="none" stroke-linecap="round" stroke-linejoin="round"/>
<path d="M1330,388 L1434,254 L1455,240" stroke="#a8a8b0" stroke-width="6" fill="none" stroke-linecap="round" stroke-linejoin="round"/><path d="M1330,388 L1434,254 L1455,240" stroke="#f6f6f9" stroke-width="3.8" fill="none" stroke-linecap="round" stroke-linejoin="round"/>
<path d="M1371,392 L1434,306 L1480,281" stroke="#a8a8b0" stroke-width="6" fill="none" stroke-linecap="round" stroke-linejoin="round"/><path d="M1371,392 L1434,306 L1480,281" stroke="#f6f6f9" stroke-width="3.8" fill="none" stroke-linecap="round" stroke-linejoin="round"/>
<path d="M1432,356 L1484,332 L1484,346 L1432,368Z" fill="#e6e6ec" stroke="#a8a8b0"/>
<path d="M1432,372 L1484,350 L1484,366 L1432,392Z" fill="#e6e6ec" stroke="#a8a8b0"/>
<path d="M1410,392 L1428,364 L1440,392Z" fill="#ececf0" stroke="#b0b0b8" stroke-dasharray="2 1.5"/>
</g><g clip-path="url(#q3)">
<path d="M1172,428 L1172,545" stroke="#a8a8b0" stroke-width="5" fill="none" stroke-linecap="round" stroke-linejoin="round"/><path d="M1172,428 L1172,545" stroke="#f6f6f9" stroke-width="2.8" fill="none" stroke-linecap="round" stroke-linejoin="round"/>
<path d="M1206,410 L1206,545" stroke="#a8a8b0" stroke-width="5" fill="none" stroke-linecap="round" stroke-linejoin="round"/><path d="M1206,410 L1206,545" stroke="#f6f6f9" stroke-width="2.8" fill="none" stroke-linecap="round" stroke-linejoin="round"/>
<path d="M1245,410 L1245,545" stroke="#a8a8b0" stroke-width="5" fill="none" stroke-linecap="round" stroke-linejoin="round"/><path d="M1245,410 L1245,545" stroke="#f6f6f9" stroke-width="2.8" fill="none" stroke-linecap="round" stroke-linejoin="round"/>
<path d="M1271,410 L1271,545" stroke="#a8a8b0" stroke-width="5" fill="none" stroke-linecap="round" stroke-linejoin="round"/><path d="M1271,410 L1271,545" stroke="#f6f6f9" stroke-width="2.8" fill="none" stroke-linecap="round" stroke-linejoin="round"/>
<path d="M1154,434 L1225,393 L1300,434" stroke="#a8a8b0" stroke-width="6" fill="none" stroke-linecap="round" stroke-linejoin="round"/><path d="M1154,434 L1225,393 L1300,434" stroke="#f6f6f9" stroke-width="3.8" fill="none" stroke-linecap="round" stroke-linejoin="round"/>
<path d="M1154,488 L1225,448 L1300,488" stroke="#a8a8b0" stroke-width="6" fill="none" stroke-linecap="round" stroke-linejoin="round"/><path d="M1154,488 L1225,448 L1300,488" stroke="#f6f6f9" stroke-width="3.8" fill="none" stroke-linecap="round" stroke-linejoin="round"/>
<path d="M1150,545 L1225,497 L1300,545Z" fill="#ebebf0" stroke="#b4b4bc"/>
<path d="M1175,545 L1225,512 L1275,545" fill="#e0e0e6" stroke="#c0c0c8"/>
<path d="M1200,545 L1225,528 L1250,545" fill="none" stroke="#c4c4cc"/>
<path d="M1371,428 L1371,545" stroke="#a8a8b0" stroke-width="5" fill="none" stroke-linecap="round" stroke-linejoin="round"/><path d="M1371,428 L1371,545" stroke="#f6f6f9" stroke-width="2.8" fill="none" stroke-linecap="round" stroke-linejoin="round"/>
<path d="M1404,410 L1404,545" stroke="#a8a8b0" stroke-width="5" fill="none" stroke-linecap="round" stroke-linejoin="round"/><path d="M1404,410 L1404,545" stroke="#f6f6f9" stroke-width="2.8" fill="none" stroke-linecap="round" stroke-linejoin="round"/>
<path d="M1445,410 L1445,545" stroke="#a8a8b0" stroke-width="5" fill="none" stroke-linecap="round" stroke-linejoin="round"/><path d="M1445,410 L1445,545" stroke="#f6f6f9" stroke-width="2.8" fill="none" stroke-linecap="round" stroke-linejoin="round"/>
<path d="M1470,410 L1470,545" stroke="#a8a8b0" stroke-width="5" fill="none" stroke-linecap="round" stroke-linejoin="round"/><path d="M1470,410 L1470,545" stroke="#f6f6f9" stroke-width="2.8" fill="none" stroke-linecap="round" stroke-linejoin="round"/>
<path d="M1354,434 L1425,393 L1500,434" stroke="#a8a8b0" stroke-width="6" fill="none" stroke-linecap="round" stroke-linejoin="round"/><path d="M1354,434 L1425,393 L1500,434" stroke="#f6f6f9" stroke-width="3.8" fill="none" stroke-linecap="round" stroke-linejoin="round"/>
<path d="M1354,488 L1425,448 L1500,488" stroke="#a8a8b0" stroke-width="6" fill="none" stroke-linecap="round" stroke-linejoin="round"/><path d="M1354,488 L1425,448 L1500,488" stroke="#f6f6f9" stroke-width="3.8" fill="none" stroke-linecap="round" stroke-linejoin="round"/>
<path d="M1350,545 L1425,497 L1500,545Z" fill="#ebebf0" stroke="#b4b4bc"/>
<path d="M1375,545 L1425,512 L1475,545" fill="#e0e0e6" stroke="#c0c0c8"/>
<path d="M1400,545 L1425,528 L1450,545" fill="none" stroke="#c4c4cc"/>
</g>
<rect x="1324" y="243" width="3" height="300" fill="#fdfdfe"/>
<rect x="1141" y="388" width="353" height="3" fill="#fdfdfe"/>
</g>
<rect x="1141" y="243" width="354" height="300" rx="7" fill="none" stroke="#505050" stroke-width="2"/>
</svg>
<div class="a" style="left:1140px;top:566px;width:356px;height:233px;border:2px solid #555;border-radius:7px;background:#fbfbfd"></div>
<div class="t" style="left:1144px;top:571px;font-size:12px;color:#222">Selection order: 1. Beam, 2. Beam</div>
<div class="t" style="left:1144px;top:603px;font-size:12px;color:#222">Profiles: angle, hollow sections, flat</div>
<div class="t" style="left:1144px;top:635px;font-size:12px;color:#222">Description: Two handrails are connected with an elbow or miter</div>
<div class="t" style="left:1144px;top:651px;font-size:12px;color:#222">cut.</div>
<div class="t" style="left:1144px;top:683px;font-size:12px;color:#222">Options:</div>
<svg style="left:1496px;top:796px" width="10" height="10"><path d="M8 2v1M5 5v1M8 5v1M2 8v1M5 8v1M8 8v1" stroke="#aaa" stroke-width="1.5"/></svg>
<div class="a" style="left:0;top:835px;width:1536px;height:29px;background:#3a3a3a"></div>
<div class="a" style="left:0;top:855px;width:1536px;height:9px;background:#2f2f2f;border-bottom:2px solid #555"></div>
<svg style="left:0;top:836px" width="240" height="20"><path d="M8 0h58l-5 14q-2 4 -8 4H20q-6 0 -8 -4z" fill="#5e5e5e"/><path d="M68 0h62l-4 14q-2 4 -8 4H78q-6 0 -8 -4z" fill="#4c4c4c"/><path d="M133 0h64l-4 14q-2 4 -8 4h-47q-6 0 -8 -4z" fill="#4c4c4c"/><path d="M203 2h22l-4 12q-2 4 -8 4h-12z" fill="#4c4c4c"/></svg>
<div class="t" style="left:21px;top:838px;font-weight:bold;color:#f0f0f0">Model</div>
<div class="t" style="left:79px;top:838px;color:#bdbdbd">Layout1</div>
<div class="t" style="left:144px;top:838px;color:#bdbdbd">Layout2</div>
<div class="t" style="left:207px;top:835px;color:#ddd;font-size:15px;font-weight:bold">+</div>
<div class="a" style="left:970px;top:836px;width:566px;height:26px;background:#474747"></div>
<div class="a" style="left:1018px;top:836px;width:2px;height:26px;background:#3a3a3a"></div>
<div class="a" style="left:1084px;top:836px;width:2px;height:26px;background:#3a3a3a"></div>
<div class="a" style="left:1189px;top:836px;width:2px;height:26px;background:#3a3a3a"></div>
<div class="a" style="left:1252px;top:836px;width:2px;height:26px;background:#3a3a3a"></div>
<div class="a" style="left:1365px;top:836px;width:2px;height:26px;background:#3a3a3a"></div>
<div class="a" style="left:1406px;top:836px;width:2px;height:26px;background:#3a3a3a"></div>
<div class="a" style="left:1432px;top:836px;width:2px;height:26px;background:#3a3a3a"></div>
<div class="a" style="left:1458px;top:836px;width:2px;height:26px;background:#3a3a3a"></div>
<div class="a" style="left:1487px;top:836px;width:2px;height:26px;background:#3a3a3a"></div>
<div class="a" style="left:1514px;top:836px;width:2px;height:26px;background:#3a3a3a"></div>
<div class="a" style="left:1191px;top:838px;width:23px;height:23px;background:#5b8ec6"></div>
<div class="a" style="left:1216px;top:838px;width:23px;height:23px;background:#5b8ec6"></div>
<div class="a" style="left:1257px;top:838px;width:24px;height:23px;background:#5b8ec6"></div>
<div class="t" style="left:975px;top:842px;font-size:12.5px;color:#ececec">MODEL</div>
<svg style="left:1020px;top:838px" width="516" height="24">
 <path d="M6 7h16M6 12h16M6 17h16M9 3v18M14 3v18M19 3v18" stroke="#e6e6e6" stroke-width="1.2"/>
 <g fill="#e6e6e6"><rect x="32" y="5" width="2" height="2"/><rect x="37" y="5" width="2" height="2"/><rect x="42" y="5" width="2" height="2"/><rect x="32" y="10" width="2" height="2"/><rect x="37" y="10" width="2" height="2"/><rect x="42" y="10" width="2" height="2"/><rect x="32" y="15" width="2" height="2"/><rect x="37" y="15" width="2" height="2"/><rect x="42" y="15" width="2" height="2"/></g>
 <path d="M53 9l4 4 4-4z" fill="#e6e6e6"/>
 <path d="M70 3v17h18M70 16h3v4" stroke="#ccc" stroke-width="1.2" fill="none"/>
 <circle cx="106" cy="12" r="7" fill="none" stroke="#bbb" stroke-width="1.3"/><path d="M100 15l14-9M106 12h10" stroke="#bbb" stroke-width="1.2"/>
 <path d="M120 9l4 4 4-4z" fill="#e6e6e6"/>
 <path d="M152 3v18M147 5l10 14" stroke="#8a8a8a" stroke-width="1.3"/>
 <path d="M157 9l4 4 4-4z" fill="#e6e6e6"/>
 <path d="M177 18l16-11M177 18h16" stroke="#dbe8f7" stroke-width="1.5"/>
 <rect x="201" y="5" width="13" height="14" fill="none" stroke="#dbe8f7" stroke-width="1.5"/><rect x="198" y="2" width="5" height="5" fill="#5b8ec6" stroke="#dbe8f7"/>
 <path d="M222 9l4 4 4-4z" fill="#e6e6e6"/>
 <path d="M249 3l-7 17 7-5 7 5z" fill="#f0f0f0"/><circle cx="254" cy="6" r="2.5" fill="none" stroke="#f0f0f0"/>
 <path d="M274 3l-7 17 7-5 7 5z" fill="#e0e0e0"/><path d="M280 3l-3 6" stroke="#e0e0e0" stroke-width="1.5"/>
 <path d="M298 3l-7 17 7-5 7 5z" fill="#999"/>
 <text x="315" y="17" font-size="13" fill="#bbb" font-family="Liberation Sans">1:1</text><path d="M337 9l3 3 3-3z" fill="#bbb"/>
 <circle cx="358" cy="12" r="6" fill="none" stroke="#e6e6e6" stroke-width="3.5" stroke-dasharray="2.5 1.8"/><circle cx="358" cy="12" r="3.5" fill="#e6e6e6"/><circle cx="358" cy="12" r="1.5" fill="#474747"/>
 <path d="M372 9l4 4 4-4z" fill="#e6e6e6"/>
 <path d="M397 3v18M388 12h18" stroke="#f0f0f0" stroke-width="2.2"/>
 <rect x="418" y="2" width="7" height="7" fill="none" stroke="#ddd"/><circle cx="430" cy="11" r="3.5" fill="none" stroke="#ddd"/><path d="M422 14l-4 7h8z" fill="none" stroke="#ddd"/>
 <path d="M443 2h13l4 4v14h-17z" fill="#8ec0ee"/><rect x="443" y="13" width="12" height="7" fill="#e8c840"/><path d="M451 16l3 4 6-7" stroke="#3cb040" stroke-width="2" fill="none"/>
 <rect x="474" y="5" width="17" height="14" fill="none" stroke="#ccc" stroke-width="1.3"/><path d="M477 16l4-4M488 8l-4 4" stroke="#ccc" stroke-width="1.3"/><path d="M477 12v4h4M488 12V8h-4" stroke="#ccc" fill="none"/>
 <path d="M498 6h17M498 12h17M498 18h17" stroke="#eee" stroke-width="2.2"/>
</svg>
</body></html>
